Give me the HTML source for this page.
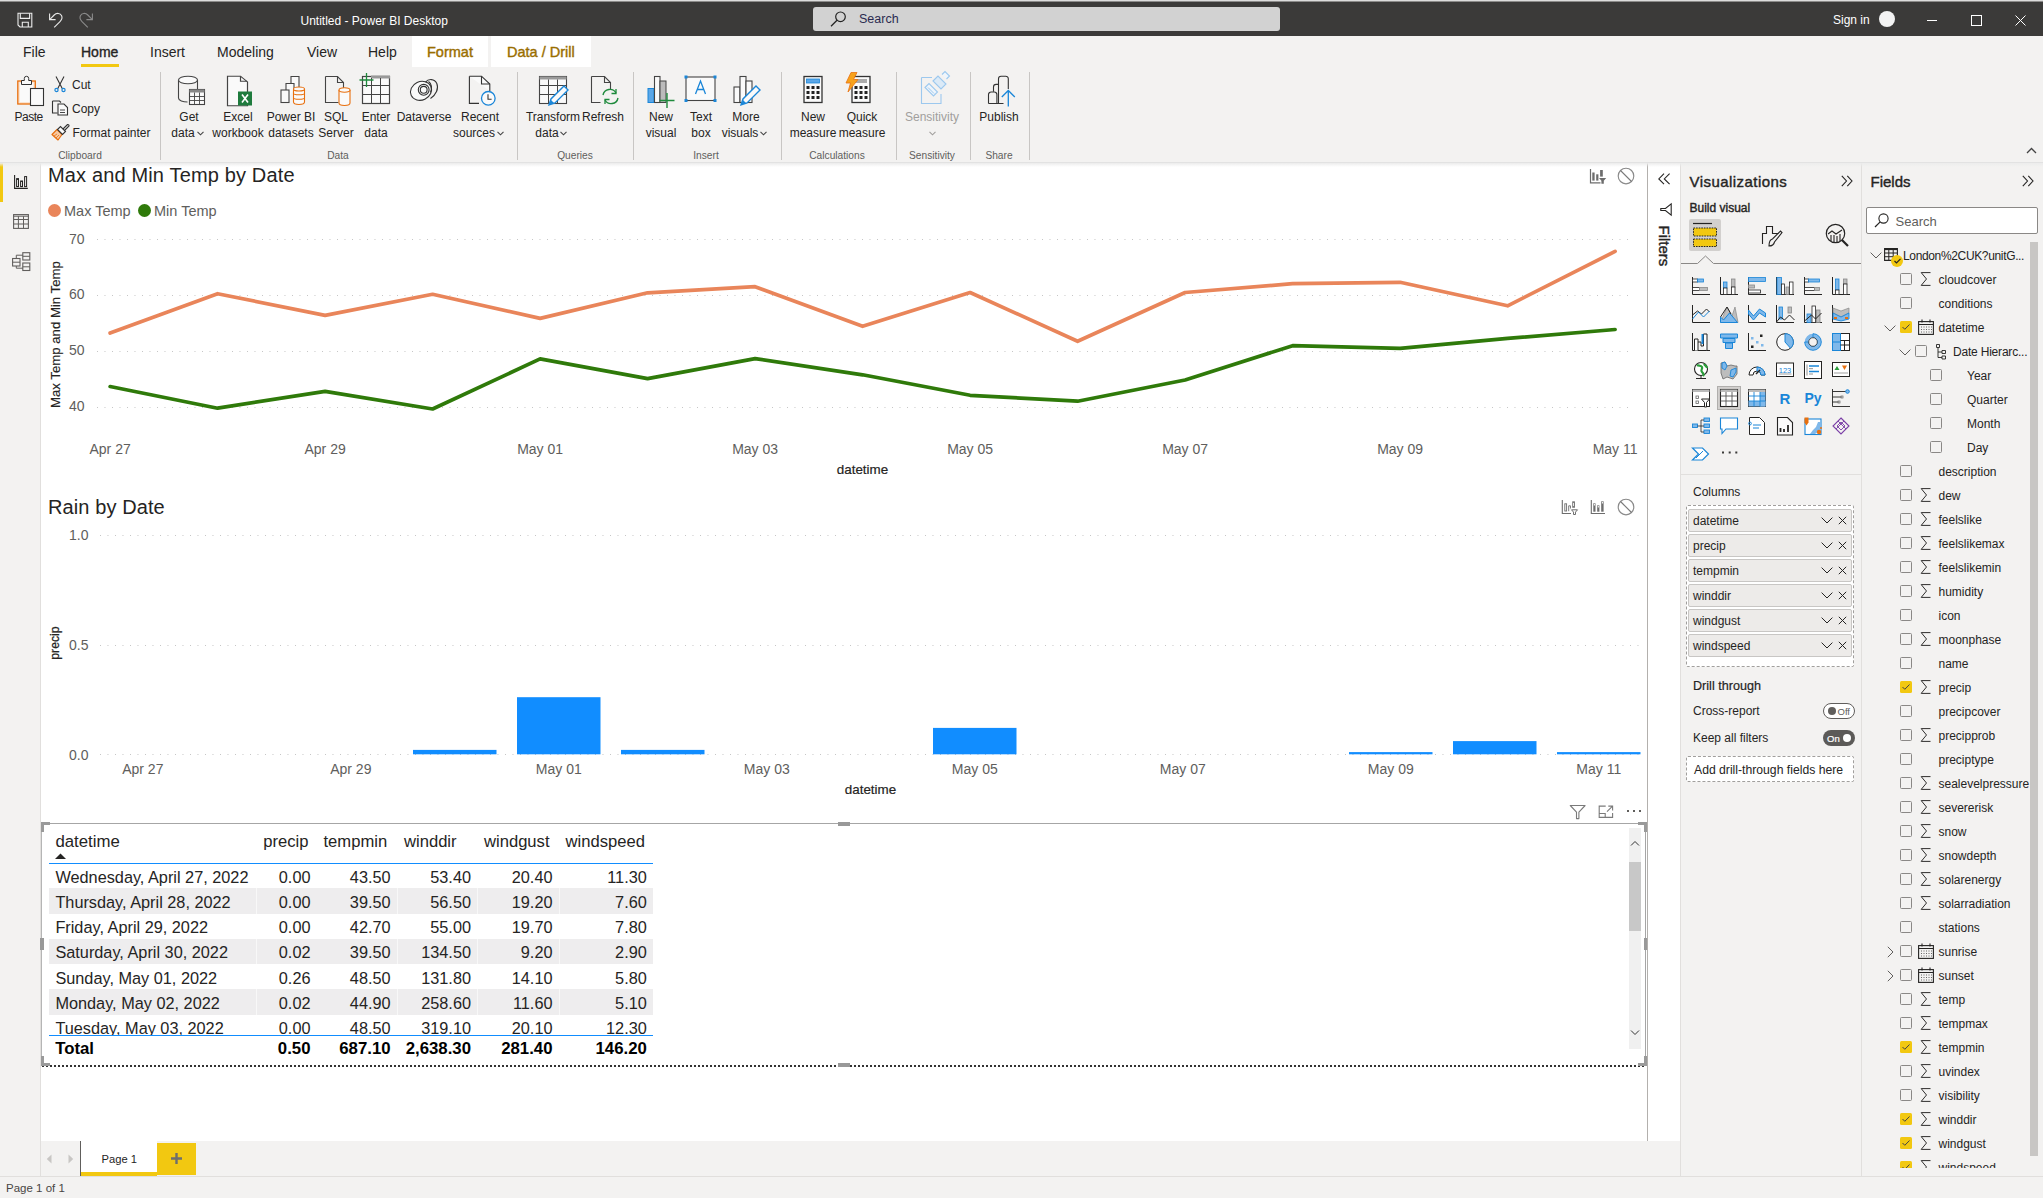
<!DOCTYPE html>
<html><head><meta charset="utf-8"><style>
html,body{margin:0;padding:0;}
body{width:2043px;height:1198px;position:relative;overflow:hidden;background:#f3f2f1;font-family:"Liberation Sans", sans-serif;}
.t{position:absolute;line-height:1;white-space:nowrap;}
svg{overflow:visible}
</style></head><body>
<div style="position:absolute;left:0px;top:0px;width:2043px;height:36px;background:#3b3a39"></div><div style="position:absolute;left:0px;top:0px;width:2043px;height:1px;background:#dcdcdc"></div><div style="position:absolute;left:0px;top:1px;width:2043px;height:1px;background:#8c8b8a"></div><svg style="position:absolute;left:17px;top:12px" width="16" height="16" viewBox="0 0 16 16" fill="none"><path d="M1 1.2H14.8V15H3L1 13z" stroke="#ededed" stroke-width="1.1"/><path d="M3.3 1.2V6.4H12.6V1.2M5.3 15V10.3H11.3V15" stroke="#ededed" stroke-width="1.1"/></svg><svg style="position:absolute;left:48px;top:12px" width="16" height="16" viewBox="0 0 16 16" fill="none"><path d="M1.6 1.5V7.6H7.6" stroke="#e8e8e8" stroke-width="1.1"/><path d="M1.9 7.3L6.2 3C8.6 0.6 12.3 1 13.6 3.8C14.6 6 13.6 8 12 9.6L6.2 15.4" stroke="#e8e8e8" stroke-width="1.1"/></svg><svg style="position:absolute;left:78px;top:12px" width="16" height="16" viewBox="0 0 16 16" fill="none"><g transform="translate(16,0) scale(-1,1)"><path d="M1.6 1.5V7.6H7.6" stroke="#8a8a8a" stroke-width="1.1"/><path d="M1.9 7.3L6.2 3C8.6 0.6 12.3 1 13.6 3.8C14.6 6 13.6 8 12 9.6L6.2 15.4" stroke="#8a8a8a" stroke-width="1.1"/></g></svg><div class="t" style="left:300.5px;top:14.8px;font-size:12px;color:#ffffff;font-weight:400;">Untitled - Power BI Desktop</div><div style="position:absolute;left:813px;top:7px;width:467px;height:24px;background:#d2d2d2;border-radius:3px"></div><svg style="position:absolute;left:830px;top:11px" width="17" height="16" viewBox="0 0 17 16" fill="none"><circle cx="10.5" cy="5.8" r="4.8" stroke="#222" stroke-width="1.2"/><path d="M7 9.3L1 15.2" stroke="#222" stroke-width="1.3"/></svg><div class="t" style="left:859.0px;top:13.4px;font-size:12.5px;color:#2b2b50;font-weight:400;">Search</div><div class="t" style="left:1833.0px;top:13.8px;font-size:12px;color:#ffffff;font-weight:400;">Sign in</div><div style="position:absolute;left:1879px;top:11px;width:16px;height:16px;border-radius:50%;background:#f3f3f3"></div><div style="position:absolute;left:1927px;top:20px;width:10px;height:1px;background:#fff"></div><div style="position:absolute;left:1971px;top:15px;width:9px;height:9px;border:1px solid #fff"></div><svg style="position:absolute;left:2015px;top:15px" width="11" height="11" viewBox="0 0 11 11" fill="none"><path d="M0.5 0.5l10 10M10.5 0.5l-10 10" stroke="#fff" stroke-width="1"/></svg><div style="position:absolute;left:0px;top:36px;width:2043px;height:126px;background:#f3f2f1"></div><div style="position:absolute;left:412px;top:36px;width:76px;height:31px;background:#ffffff"></div><div style="position:absolute;left:491px;top:36px;width:100px;height:31px;background:#ffffff"></div><div class="t" style="left:23.0px;top:45.1px;font-size:14px;color:#252423;font-weight:400;">File</div><div class="t" style="left:150.0px;top:45.1px;font-size:14px;color:#252423;font-weight:400;">Insert</div><div class="t" style="left:217.0px;top:45.1px;font-size:14px;color:#252423;font-weight:400;">Modeling</div><div class="t" style="left:307.0px;top:45.1px;font-size:14px;color:#252423;font-weight:400;">View</div><div class="t" style="left:368.0px;top:45.1px;font-size:14px;color:#252423;font-weight:400;">Help</div><div class="t" style="left:81.0px;top:45.1px;font-size:14px;color:#252423;font-weight:400;-webkit-text-stroke:0.35px currentColor;">Home</div><div class="t" style="left:427.0px;top:44.7px;font-size:14.5px;color:#9a6e00;font-weight:400;-webkit-text-stroke:0.4px currentColor;">Format</div><div class="t" style="left:507.0px;top:44.7px;font-size:14.5px;color:#9a6e00;font-weight:400;-webkit-text-stroke:0.4px currentColor;">Data / Drill</div><div style="position:absolute;left:81px;top:64px;width:38px;height:3px;background:#f2c811"></div><svg style="position:absolute;left:16px;top:75px" width="30" height="32" viewBox="0 0 30 32" fill="none"><rect x="1.8" y="6" width="17.5" height="23" fill="#fbe3cf" stroke="#e8700f" stroke-width="1.3"/><rect x="3.8" y="8" width="13.5" height="19" fill="#fafafa"/><path d="M5.5 9.5V5.5h2.8V3.5a2.2 2.2 0 0 1 4.4 0v2h2.8v4z" fill="#fafafa" stroke="#333" stroke-width="1"/><rect x="14.5" y="13.5" width="13" height="17" fill="#fafafa" stroke="#333" stroke-width="1.1"/></svg><div class="t" style="left:14.5px;top:110.8px;font-size:12px;color:#252423;font-weight:400;letter-spacing:-0.5px">Paste</div><svg style="position:absolute;left:54px;top:76px" width="12" height="16" viewBox="0 0 12 16" fill="none"><path d="M2 0.5L8.5 13M10 0.5L3.5 13" stroke="#333" stroke-width="1.1"/><circle cx="2.5" cy="14" r="1.6" stroke="#1a86d8" stroke-width="1.2"/><circle cx="9.5" cy="14" r="1.6" stroke="#1a86d8" stroke-width="1.2"/></svg><div class="t" style="left:72.0px;top:78.8px;font-size:12px;color:#252423;font-weight:400;">Cut</div><svg style="position:absolute;left:51px;top:100px" width="18" height="16" viewBox="0 0 18 16" fill="none"><path d="M1.5 1v12h5M1.5 1h7l1.5 1.5" stroke="#333" stroke-width="1.1"/><path d="M7 4h6l3.5 3.5V15H7z" fill="#fafafa" stroke="#333" stroke-width="1.1"/><path d="M9 10h5M9 12.5h5" stroke="#333" stroke-width="0.9"/></svg><div class="t" style="left:72.0px;top:102.8px;font-size:12px;color:#252423;font-weight:400;">Copy</div><svg style="position:absolute;left:51px;top:123px" width="18" height="18" viewBox="0 0 18 18" fill="none"><path d="M1 11.5L6 6.5L11 11.5L7 17z" fill="#f8c9a1" stroke="#e8700f" stroke-width="1.2" stroke-linejoin="round"/><path d="M3 13l3-2M5 15l3-3" stroke="#e8700f" stroke-width="0.8"/><path d="M6.5 6.5l3-3 5 5-3 3z" fill="#fafafa" stroke="#333" stroke-width="1.1"/><path d="M12 6l4.5-4.5a1.2 1.2 0 0 1 1.5 1.5L13.5 7.5" stroke="#333" stroke-width="1.1"/></svg><div class="t" style="left:72.5px;top:126.8px;font-size:12px;color:#252423;font-weight:400;">Format painter</div><div class="t" style="left:-420.0px;width:1000px;text-align:center;top:151.4px;font-size:10.2px;color:#605e5c;font-weight:400;">Clipboard</div><div style="position:absolute;left:160px;top:72px;width:1px;height:88px;background:#c8c6c4"></div><svg style="position:absolute;left:177px;top:75px" width="30" height="32" viewBox="0 0 30 32" fill="none"><path d="M1.5 5v18c0 2.5 4.5 4 9 4" stroke="#444" stroke-width="1.1"/><ellipse cx="11" cy="5" rx="9.5" ry="3.8" fill="#fafafa" stroke="#444" stroke-width="1.1"/><path d="M20.5 5v9" stroke="#444" stroke-width="1.1"/><rect x="12.5" y="14.5" width="15" height="15" fill="#fafafa" stroke="#444" stroke-width="1.1"/><rect x="12.5" y="14.5" width="15" height="3" fill="#888"/><path d="M12.5 21.5h15M12.5 25.5h15M17.5 17.5v12M22.5 17.5v12" stroke="#444" stroke-width="0.9"/></svg><div class="t" style="left:-311.0px;width:1000px;text-align:center;top:110.8px;font-size:12px;color:#252423;font-weight:400;">Get</div><div class="t" style="left:-317.0px;width:1000px;text-align:center;top:126.8px;font-size:12px;color:#252423;font-weight:400;">data</div><svg style="position:absolute;left:197px;top:131px" width="7" height="5" viewBox="0 0 7 5" fill="none"><path d="M0.5 0.8L3.5 3.8L6.5 0.8" stroke="#444" stroke-width="1.1"/></svg><svg style="position:absolute;left:226px;top:75px" width="28" height="32" viewBox="0 0 28 32" fill="none"><path d="M1.5 1.5h13l7 7v29h-20z" transform="scale(1,0.82)" fill="#fafafa" stroke="#444" stroke-width="1.2"/><path d="M14.5 1.5v6h6.5" transform="scale(1,0.82)" stroke="#444" stroke-width="1.2"/><rect x="12" y="16.5" width="14" height="14" fill="#1e7b3d"/><path d="M16 19.5l6 8M22 19.5l-6 8" stroke="#fff" stroke-width="1.6"/></svg><div class="t" style="left:-262.0px;width:1000px;text-align:center;top:110.8px;font-size:12px;color:#252423;font-weight:400;">Excel</div><div class="t" style="left:-262.0px;width:1000px;text-align:center;top:126.8px;font-size:12px;color:#252423;font-weight:400;">workbook</div><svg style="position:absolute;left:280px;top:75px" width="28" height="32" viewBox="0 0 28 32" fill="none"><path d="M11 16V1.5h8V13" fill="#fafafa" stroke="#444" stroke-width="1.1"/><path d="M6 27V8.5h8V14" fill="#fafafa" stroke="#444" stroke-width="1.1"/><rect x="1" y="15" width="8" height="12.5" fill="#fafafa" stroke="#444" stroke-width="1.1"/><path d="M13.5 14v13c0 1.7 2.5 2.5 5.5 2.5s5.5-.8 5.5-2.5V14" fill="#fafafa" stroke="#e8700f" stroke-width="1.1"/><ellipse cx="19" cy="14" rx="5.5" ry="2" fill="#fafafa" stroke="#e8700f" stroke-width="1.1"/><path d="M13.5 18.5c0 1.7 11 1.7 11 0M13.5 23c0 1.7 11 1.7 11 0" stroke="#e8700f" stroke-width="1.1"/></svg><div class="t" style="left:-209.0px;width:1000px;text-align:center;top:110.8px;font-size:12px;color:#252423;font-weight:400;">Power BI</div><div class="t" style="left:-209.0px;width:1000px;text-align:center;top:126.8px;font-size:12px;color:#252423;font-weight:400;">datasets</div><svg style="position:absolute;left:324px;top:75px" width="30" height="32" viewBox="0 0 30 32" fill="none"><path d="M1.5 1.5h12l6 6V19" fill="none" stroke="#444" stroke-width="1.1"/><path d="M1.5 1.5v26h13" stroke="#444" stroke-width="1.1"/><path d="M13.5 1.5v6h6" stroke="#444" stroke-width="1.1"/><path d="M15 15v13c0 1.7 2.5 2.5 5.5 2.5S26 29.7 26 28V15" fill="#fafafa" stroke="#e8700f" stroke-width="1.1"/><ellipse cx="20.5" cy="15" rx="5.5" ry="2.2" fill="#fafafa" stroke="#e8700f" stroke-width="1.1"/></svg><div class="t" style="left:-164.0px;width:1000px;text-align:center;top:110.8px;font-size:12px;color:#252423;font-weight:400;">SQL</div><div class="t" style="left:-164.0px;width:1000px;text-align:center;top:126.8px;font-size:12px;color:#252423;font-weight:400;">Server</div><svg style="position:absolute;left:359px;top:73px" width="33" height="34" viewBox="0 0 33 34" fill="none"><rect x="3.5" y="3.5" width="27" height="27" fill="#fafafa" stroke="#444" stroke-width="1.2"/><rect x="12" y="2.5" width="19" height="3" fill="#999"/><path d="M3.5 12.5h27M3.5 21.5h27M12.5 5v25.5M21.5 5v25.5" stroke="#444" stroke-width="1"/><path d="M7.5 0v14M0.5 7h14" stroke="#1e8a3c" stroke-width="1.3"/></svg><div class="t" style="left:-124.0px;width:1000px;text-align:center;top:110.8px;font-size:12px;color:#252423;font-weight:400;">Enter</div><div class="t" style="left:-124.0px;width:1000px;text-align:center;top:126.8px;font-size:12px;color:#252423;font-weight:400;">data</div><svg style="position:absolute;left:409px;top:77px" width="32" height="26" viewBox="0 0 32 26" fill="none"><ellipse cx="12" cy="13.8" rx="10.8" ry="9.2" transform="rotate(-25 12 13.8)" fill="#fafafa" stroke="#333" stroke-width="1.1"/><path d="M16.5 5.2C19.5 1.5 25.5 1.5 27.8 6.5C30 11.5 27 18 21.5 21.5" stroke="#333" stroke-width="1.1"/><path d="M19.5 4.5C22.5 6.5 23.5 11 21.5 15.5" stroke="#333" stroke-width="1.1"/><circle cx="14.7" cy="12.8" r="5.4" fill="#fafafa" stroke="#333" stroke-width="1.1"/><circle cx="14.7" cy="12.8" r="3.4" stroke="#333" stroke-width="1.1"/></svg><div class="t" style="left:-76.0px;width:1000px;text-align:center;top:110.8px;font-size:12px;color:#252423;font-weight:400;">Dataverse</div><svg style="position:absolute;left:468px;top:75px" width="32" height="32" viewBox="0 0 32 32" fill="none"><path d="M1.4 1.2H13.5L21.8 9V16" fill="#fafafa" stroke="#333" stroke-width="1.1"/><path d="M1.4 1.2V28.4H11" stroke="#333" stroke-width="1.1"/><path d="M13.5 1.2V9H21.8" stroke="#333" stroke-width="1.1"/><circle cx="20.3" cy="23.3" r="6.8" fill="#fafafa" stroke="#1a86d8" stroke-width="1.3"/><path d="M20 19.3V24.2H23.6" stroke="#333" stroke-width="1.1"/></svg><div class="t" style="left:-20.0px;width:1000px;text-align:center;top:110.8px;font-size:12px;color:#252423;font-weight:400;">Recent</div><div class="t" style="left:-26.0px;width:1000px;text-align:center;top:126.8px;font-size:12px;color:#252423;font-weight:400;">sources</div><svg style="position:absolute;left:497px;top:131px" width="7" height="5" viewBox="0 0 7 5" fill="none"><path d="M0.5 0.8L3.5 3.8L6.5 0.8" stroke="#444" stroke-width="1.1"/></svg><div class="t" style="left:-162.0px;width:1000px;text-align:center;top:151.4px;font-size:10.2px;color:#605e5c;font-weight:400;">Data</div><div style="position:absolute;left:517px;top:72px;width:1px;height:88px;background:#c8c6c4"></div><svg style="position:absolute;left:538px;top:75px" width="33" height="32" viewBox="0 0 33 32" fill="none"><rect x="1.5" y="1.5" width="27" height="27" fill="#fafafa" stroke="#444" stroke-width="1.1"/><rect x="1.5" y="1.5" width="27" height="3" fill="#999"/><path d="M1.5 10.5h27M1.5 19.5h27M10.5 4.5v24M19.5 4.5v24" stroke="#444" stroke-width="1"/><path d="M11 30l2-6 13-13 4 4-13 13z" fill="#fafafa" stroke="#1a86d8" stroke-width="1.4"/><path d="M11 30l2-5 3 3z" fill="#1a86d8"/></svg><div class="t" style="left:53.0px;width:1000px;text-align:center;top:110.8px;font-size:12px;color:#252423;font-weight:400;">Transform</div><div class="t" style="left:47.0px;width:1000px;text-align:center;top:126.8px;font-size:12px;color:#252423;font-weight:400;">data</div><svg style="position:absolute;left:560px;top:131px" width="7" height="5" viewBox="0 0 7 5" fill="none"><path d="M0.5 0.8L3.5 3.8L6.5 0.8" stroke="#444" stroke-width="1.1"/></svg><svg style="position:absolute;left:590px;top:75px" width="31" height="32" viewBox="0 0 31 32" fill="none"><path d="M1.5 1.5h13l6 6V14" stroke="#444" stroke-width="1.1"/><path d="M1.5 1.5v26h9" stroke="#444" stroke-width="1.1"/><path d="M14.5 1.5v6h6" stroke="#444" stroke-width="1.1"/><path d="M13 20a7 7 0 0 1 13-2M28 23a7 7 0 0 1-13 2" stroke="#1e8a3c" stroke-width="1.4"/><path d="M26 14v4.5h-4.5M15 29v-4.5h4.5" stroke="#1e8a3c" stroke-width="1.3"/></svg><div class="t" style="left:103.0px;width:1000px;text-align:center;top:110.8px;font-size:12px;color:#252423;font-weight:400;">Refresh</div><div class="t" style="left:75.0px;width:1000px;text-align:center;top:151.4px;font-size:10.2px;color:#605e5c;font-weight:400;">Queries</div><div style="position:absolute;left:633px;top:72px;width:1px;height:88px;background:#c8c6c4"></div><svg style="position:absolute;left:647px;top:75px" width="32" height="32" viewBox="0 0 32 32" fill="none"><rect x="1" y="13.5" width="6" height="14" fill="#5ba7e8" stroke="#1a86d8" stroke-width="1"/><rect x="7.5" y="1.5" width="5.5" height="26" fill="#fafafa" stroke="#444" stroke-width="1.1"/><rect x="13" y="6" width="6" height="21.5" fill="#bbb" stroke="#444" stroke-width="1"/><path d="M20 18v15M12.5 25.5h15" stroke="#1e8a3c" stroke-width="1.4"/></svg><div class="t" style="left:161.0px;width:1000px;text-align:center;top:110.8px;font-size:12px;color:#252423;font-weight:400;">New</div><div class="t" style="left:161.0px;width:1000px;text-align:center;top:126.8px;font-size:12px;color:#252423;font-weight:400;">visual</div><svg style="position:absolute;left:684px;top:75px" width="33" height="30" viewBox="0 0 33 30" fill="none"><rect x="2" y="2" width="29" height="23.5" fill="#fafafa" stroke="#444" stroke-width="1.1"/><rect x="0.5" y="0.5" width="3" height="3" fill="#1a86d8"/><rect x="29.5" y="0.5" width="3" height="3" fill="#1a86d8"/><rect x="0.5" y="24" width="3" height="3" fill="#1a86d8"/><rect x="29.5" y="24" width="3" height="3" fill="#1a86d8"/><path d="M11.5 19l5-13 5 13M13.5 14.5h6" stroke="#1a86d8" stroke-width="1.3"/></svg><div class="t" style="left:201.0px;width:1000px;text-align:center;top:110.8px;font-size:12px;color:#252423;font-weight:400;">Text</div><div class="t" style="left:201.0px;width:1000px;text-align:center;top:126.8px;font-size:12px;color:#252423;font-weight:400;">box</div><svg style="position:absolute;left:733px;top:75px" width="32" height="32" viewBox="0 0 32 32" fill="none"><rect x="1" y="12" width="6" height="15.5" fill="#fafafa" stroke="#444" stroke-width="1.1"/><rect x="7" y="1.5" width="6" height="26" fill="#fafafa" stroke="#444" stroke-width="1.1"/><rect x="13" y="6" width="6" height="21.5" fill="#fafafa" stroke="#444" stroke-width="1.1"/><path d="M8 30l2-6 13-13 4 4-13 13z" fill="#fafafa" stroke="#1a86d8" stroke-width="1.4"/><path d="M8 30l2-5 3 3z" fill="#1a86d8"/></svg><div class="t" style="left:246.0px;width:1000px;text-align:center;top:110.8px;font-size:12px;color:#252423;font-weight:400;">More</div><div class="t" style="left:240.0px;width:1000px;text-align:center;top:126.8px;font-size:12px;color:#252423;font-weight:400;">visuals</div><svg style="position:absolute;left:760px;top:131px" width="7" height="5" viewBox="0 0 7 5" fill="none"><path d="M0.5 0.8L3.5 3.8L6.5 0.8" stroke="#444" stroke-width="1.1"/></svg><div class="t" style="left:206.0px;width:1000px;text-align:center;top:151.4px;font-size:10.2px;color:#605e5c;font-weight:400;">Insert</div><div style="position:absolute;left:781px;top:72px;width:1px;height:88px;background:#c8c6c4"></div><svg style="position:absolute;left:803px;top:75px" width="22" height="30" viewBox="0 0 22 30" fill="none"><rect x="1" y="1.5" width="18" height="26" fill="#fafafa" stroke="#333" stroke-width="1.3"/><rect x="3.5" y="4" width="13" height="4" fill="#5ba7e8" stroke="#1a86d8" stroke-width="0.8"/><rect x="3.5" y="11" width="3" height="3" fill="#222"/><rect x="8.5" y="11" width="3" height="3" fill="#222"/><rect x="13.5" y="11" width="3" height="3" fill="#222"/><rect x="3.5" y="16" width="3" height="3" fill="#222"/><rect x="8.5" y="16" width="3" height="3" fill="#222"/><rect x="13.5" y="16" width="3" height="3" fill="#222"/><rect x="3.5" y="21" width="3" height="3" fill="#222"/><rect x="8.5" y="21" width="3" height="3" fill="#222"/><rect x="13.5" y="21" width="3" height="3" fill="#222"/></svg><div class="t" style="left:313.0px;width:1000px;text-align:center;top:110.8px;font-size:12px;color:#252423;font-weight:400;">New</div><div class="t" style="left:313.0px;width:1000px;text-align:center;top:126.8px;font-size:12px;color:#252423;font-weight:400;">measure</div><svg style="position:absolute;left:845px;top:72px" width="28" height="33" viewBox="0 0 28 33" fill="none"><rect x="7" y="4.5" width="18" height="26" fill="#fafafa" stroke="#333" stroke-width="1.3"/><rect x="10" y="7" width="12" height="4" fill="#aaa"/><rect x="9.5" y="14" width="3" height="3" fill="#222"/><rect x="14.5" y="14" width="3" height="3" fill="#222"/><rect x="19.5" y="14" width="3" height="3" fill="#222"/><rect x="9.5" y="19" width="3" height="3" fill="#222"/><rect x="14.5" y="19" width="3" height="3" fill="#222"/><rect x="19.5" y="19" width="3" height="3" fill="#222"/><rect x="9.5" y="24" width="3" height="3" fill="#222"/><rect x="14.5" y="24" width="3" height="3" fill="#222"/><rect x="19.5" y="24" width="3" height="3" fill="#222"/><path d="M6 0.5h6l-3.5 7h4.5L3 20l2.5-9H1z" fill="#f7a21b" stroke="#e8700f" stroke-width="0.8"/></svg><div class="t" style="left:362.0px;width:1000px;text-align:center;top:110.8px;font-size:12px;color:#252423;font-weight:400;">Quick</div><div class="t" style="left:362.0px;width:1000px;text-align:center;top:126.8px;font-size:12px;color:#252423;font-weight:400;">measure</div><div class="t" style="left:337.0px;width:1000px;text-align:center;top:151.4px;font-size:10.2px;color:#605e5c;font-weight:400;">Calculations</div><div style="position:absolute;left:896px;top:72px;width:1px;height:88px;background:#c8c6c4"></div><svg style="position:absolute;left:920px;top:73px" width="32" height="32" viewBox="0 0 32 32" fill="none"><path d="M1.5 4.5H12M1.5 4.5V30.5H21V21" stroke="#9cc8ee" stroke-width="1.1"/><path d="M5 14.5L9 10.5L17.5 19L13.5 23z" fill="#eef5fc" stroke="#9cc8ee" stroke-width="1.1"/><path d="M8 14.5l6 6" stroke="#9cc8ee" stroke-width="1"/><path d="M13 8L18 3L26 11L21 16z" fill="#dbeaf7" stroke="#9cc8ee" stroke-width="1.1"/><path d="M22 1.5L25 -1.5 29.5 3 26.5 6" fill="#eef5fc" stroke="#9cc8ee" stroke-width="1.1"/></svg><div class="t" style="left:432.0px;width:1000px;text-align:center;top:110.8px;font-size:12px;color:#a19f9d;font-weight:400;">Sensitivity</div><svg style="position:absolute;left:929px;top:131px" width="7" height="5" viewBox="0 0 7 5" fill="none"><path d="M0.5 0.8L3.5 3.8L6.5 0.8" stroke="#a19f9d" stroke-width="1.1"/></svg><div class="t" style="left:432.0px;width:1000px;text-align:center;top:151.4px;font-size:10.2px;color:#605e5c;font-weight:400;">Sensitivity</div><div style="position:absolute;left:970px;top:72px;width:1px;height:88px;background:#c8c6c4"></div><svg style="position:absolute;left:987px;top:75px" width="30" height="32" viewBox="0 0 30 32" fill="none"><path d="M11.5 28.5V3.8a2.6 2.6 0 0 1 2.6-2.6h4.6a2.6 2.6 0 0 1 2.6 2.6V14" stroke="#333" stroke-width="1.1"/><path d="M6.5 16.8V12a2.6 2.6 0 0 1 2.6-2.6h2.4" stroke="#333" stroke-width="1.1"/><path d="M1.5 28.5V19.6a2.6 2.6 0 0 1 2.6-2.6h3.2a2.6 2.6 0 0 1 2.6 2.6V28.5M1.5 28.5h15" stroke="#333" stroke-width="1.1"/><path d="M21.3 31.5V15.5M14.8 22l6.5-6.5 6.5 6.5" stroke="#1a86d8" stroke-width="1.3"/></svg><div class="t" style="left:499.0px;width:1000px;text-align:center;top:110.8px;font-size:12px;color:#252423;font-weight:400;">Publish</div><div class="t" style="left:499.0px;width:1000px;text-align:center;top:151.4px;font-size:10.2px;color:#605e5c;font-weight:400;">Share</div><div style="position:absolute;left:1029px;top:72px;width:1px;height:88px;background:#c8c6c4"></div><svg style="position:absolute;left:2026px;top:147px" width="11" height="7" viewBox="0 0 11 7" fill="none"><path d="M1 6L5.5 1.5L10 6" stroke="#444" stroke-width="1.3"/></svg><div style="position:absolute;left:0px;top:162px;width:2043px;height:1px;background:#e2e2e2"></div><div style="position:absolute;left:0px;top:163px;width:40px;height:1014px;background:#f3f2f1"></div><div style="position:absolute;left:40px;top:163px;width:1px;height:1014px;background:#e1dfdd"></div><div style="position:absolute;left:0px;top:163px;width:3px;height:39px;background:#f2c811"></div><svg style="position:absolute;left:14px;top:175px" width="14" height="14" viewBox="0 0 14 14" fill="none"><path d="M0.6 0V13.4H13.8" stroke="#252423" stroke-width="1.1"/><rect x="2.6" y="3.6" width="1.9" height="8" stroke="#252423" stroke-width="1"/><rect x="6.6" y="6" width="1.9" height="5.6" stroke="#252423" stroke-width="1"/><rect x="10.6" y="1.6" width="2" height="10" stroke="#252423" stroke-width="1"/></svg><svg style="position:absolute;left:13px;top:214px" width="16" height="15" viewBox="0 0 16 15" fill="none"><rect x="0.6" y="0.6" width="14.8" height="13.8" stroke="#605e5c" stroke-width="1.1"/><path d="M0.6 2.2h14.8M0.6 5.5h14.8M0.6 10h14.8M5.4 2.2v12.2M10.5 2.2v12.2" stroke="#605e5c" stroke-width="1"/></svg><svg style="position:absolute;left:12px;top:252px" width="18" height="19" viewBox="0 0 18 19" fill="none"><rect x="10.8" y="0.7" width="7" height="7.3" stroke="#605e5c" stroke-width="1.1"/><path d="M10.8 4.3h7" stroke="#605e5c" stroke-width="1"/><rect x="0.6" y="6.5" width="7.4" height="7.5" stroke="#605e5c" stroke-width="1.1"/><path d="M0.6 10.2h7.4" stroke="#605e5c" stroke-width="1"/><rect x="10.8" y="11" width="7" height="7.5" stroke="#605e5c" stroke-width="1.1"/><path d="M10.8 14.8h7M4.3 6.5V3.2H10.8M4.3 14V16.2H10.8" stroke="#605e5c" stroke-width="1"/></svg><div style="position:absolute;left:41px;top:163px;width:1606px;height:978px;background:#ffffff"></div><div style="position:absolute;left:1647px;top:163px;width:1px;height:978px;background:#b3b0ad"></div><div style="position:absolute;left:41px;top:1141px;width:1607px;height:35px;background:#f3f2f1"></div><div style="position:absolute;left:0px;top:1176px;width:2043px;height:1px;background:#e1dfdd"></div><div style="position:absolute;left:0px;top:1177px;width:2043px;height:21px;background:#f3f2f1"></div><svg style="position:absolute;left:46px;top:1154px" width="6" height="10" viewBox="0 0 6 10" fill="none"><path d="M5.5 0.5L0.8 5l4.7 4.5z" fill="#c8c6c4"/></svg><svg style="position:absolute;left:68px;top:1154px" width="6" height="10" viewBox="0 0 6 10" fill="none"><path d="M0.5 0.5L5.2 5L0.5 9.5z" fill="#c8c6c4"/></svg><div style="position:absolute;left:80px;top:1141px;width:1px;height:35px;background:#605e5c"></div><div style="position:absolute;left:81px;top:1141px;width:76px;height:35px;background:#ffffff"></div><div style="position:absolute;left:81px;top:1172px;width:76px;height:4px;background:#f2c811"></div><div class="t" style="left:101.5px;top:1153.5px;font-size:11.2px;color:#252423;font-weight:400;">Page 1</div><div style="position:absolute;left:157px;top:1143px;width:39px;height:32px;background:#f2c811"></div><svg style="position:absolute;left:170px;top:1152px" width="13" height="13" viewBox="0 0 13 13" fill="none"><path d="M6.5 1v11M1 6.5h11" stroke="#6e6e6e" stroke-width="2.4"/></svg><div class="t" style="left:6.0px;top:1183.3px;font-size:11.5px;color:#484644;font-weight:400;">Page 1 of 1</div><div class="t" style="left:48.0px;top:165.1px;font-size:20px;color:#252423;font-weight:400;letter-spacing:0.15px">Max and Min Temp by Date</div><svg style="position:absolute;left:1589px;top:168px" width="19" height="17" viewBox="0 0 19 17" fill="none"><path d="M1.5 1v13.8h10" stroke="#6d6d6d" stroke-width="1.2"/><rect x="3.3" y="4.5" width="2.3" height="8.1" fill="#6d6d6d"/><rect x="7.2" y="6.3" width="2.2" height="6.3" fill="#6d6d6d"/><rect x="11.1" y="2" width="2.7" height="6.6" fill="#6d6d6d"/><path d="M10 10h7.2l-2.4 2.7v3h-2.4v-3z" fill="#6d6d6d"/></svg><svg style="position:absolute;left:1617px;top:167px" width="18" height="18" viewBox="0 0 18 18" fill="none"><circle cx="9" cy="9" r="7.8" stroke="#8a8a8a" stroke-width="1.15"/><path d="M3.5 3.5l11 11" stroke="#7a7a7a" stroke-width="1.1"/></svg><div style="position:absolute;left:48px;top:204px;width:13px;height:13px;border-radius:50%;background:#e9855a"></div><div class="t" style="left:64.0px;top:203.7px;font-size:14.5px;color:#605e5c;font-weight:400;">Max Temp</div><div style="position:absolute;left:138px;top:204px;width:13px;height:13px;border-radius:50%;background:#2f7a0a"></div><div class="t" style="left:154.0px;top:203.7px;font-size:14.5px;color:#605e5c;font-weight:400;">Min Temp</div><div class="t" style="right:1958.5px;top:231.5px;font-size:14px;color:#605e5c;font-weight:400;">70</div><div class="t" style="right:1958.5px;top:287.3px;font-size:14px;color:#605e5c;font-weight:400;">60</div><div class="t" style="right:1958.5px;top:343.1px;font-size:14px;color:#605e5c;font-weight:400;">50</div><div class="t" style="right:1958.5px;top:398.9px;font-size:14px;color:#605e5c;font-weight:400;">40</div><div class="t" style="left:-19px;top:328px;width:150px;text-align:center;font-size:13.2px;color:#252423;transform:rotate(-90deg);-webkit-text-stroke:0.15px currentColor;">Max Temp and Min Temp</div><div style="position:absolute;left:97px;top:238.5px;width:1535px;height:1.3px;background-image:linear-gradient(90deg,#c4c4c4 1.3px,transparent 1.3px);background-size:7.5px 1.3px;"></div><div style="position:absolute;left:97px;top:294.5px;width:1535px;height:1.3px;background-image:linear-gradient(90deg,#c4c4c4 1.3px,transparent 1.3px);background-size:7.5px 1.3px;"></div><div style="position:absolute;left:97px;top:350.5px;width:1535px;height:1.3px;background-image:linear-gradient(90deg,#c4c4c4 1.3px,transparent 1.3px);background-size:7.5px 1.3px;"></div><div style="position:absolute;left:97px;top:406.5px;width:1535px;height:1.3px;background-image:linear-gradient(90deg,#c4c4c4 1.3px,transparent 1.3px);background-size:7.5px 1.3px;"></div><svg style="position:absolute;left:41px;top:163px" width="1606" height="320" viewBox="0 0 1606 320" fill="none"><polyline points="69.1,170.0 176.6,130.7 284.1,152.4 391.6,131.3 499.1,155.4 606.6,129.8 714.1,123.7 821.6,163.3 929.1,129.5 1036.6,178.3 1144.1,129.5 1251.6,120.7 1359.1,119.3 1466.6,142.8 1574.1,88.4" stroke="#e9855a" stroke-width="3.7" stroke-linejoin="round" stroke-linecap="round" fill="none"/><polyline points="69.1,223.5 176.6,245.2 284.1,228.3 391.6,246.0 499.1,195.9 606.6,215.6 714.1,195.6 821.6,211.8 929.1,232.3 1036.6,238.2 1144.1,217.0 1251.6,182.7 1359.1,185.3 1466.6,175.4 1574.1,166.5" stroke="#2f7a0a" stroke-width="3.7" stroke-linejoin="round" stroke-linecap="round" fill="none"/></svg><div class="t" style="left:-389.9px;width:1000px;text-align:center;top:442.1px;font-size:14px;color:#605e5c;font-weight:400;">Apr 27</div><div class="t" style="left:-174.9px;width:1000px;text-align:center;top:442.1px;font-size:14px;color:#605e5c;font-weight:400;">Apr 29</div><div class="t" style="left:40.1px;width:1000px;text-align:center;top:442.1px;font-size:14px;color:#605e5c;font-weight:400;">May 01</div><div class="t" style="left:255.1px;width:1000px;text-align:center;top:442.1px;font-size:14px;color:#605e5c;font-weight:400;">May 03</div><div class="t" style="left:470.1px;width:1000px;text-align:center;top:442.1px;font-size:14px;color:#605e5c;font-weight:400;">May 05</div><div class="t" style="left:685.1px;width:1000px;text-align:center;top:442.1px;font-size:14px;color:#605e5c;font-weight:400;">May 07</div><div class="t" style="left:900.1px;width:1000px;text-align:center;top:442.1px;font-size:14px;color:#605e5c;font-weight:400;">May 09</div><div class="t" style="left:1115.1px;width:1000px;text-align:center;top:442.1px;font-size:14px;color:#605e5c;font-weight:400;">May 11</div><div class="t" style="left:362.5px;width:1000px;text-align:center;top:462.7px;font-size:13.4px;color:#252423;font-weight:400;-webkit-text-stroke:0.2px currentColor;">datetime</div><div class="t" style="left:48.0px;top:496.6px;font-size:20px;color:#252423;font-weight:400;letter-spacing:0.1px">Rain by Date</div><svg style="position:absolute;left:1561px;top:499px" width="18" height="17" viewBox="0 0 18 17" fill="none"><path d="M1.3 1V14.5H10" stroke="#6d6d6d" stroke-width="1.1"/><rect x="3.8" y="4.8" width="1.8" height="7.2" stroke="#6d6d6d" stroke-width="0.9"/><path d="M7.7 12.2V6.8h1.8V9.5" stroke="#6d6d6d" stroke-width="0.9"/><rect x="11.7" y="2.8" width="1.8" height="5.5" stroke="#6d6d6d" stroke-width="0.9"/><path d="M10.5 10.8h6l-2 2.3v2.4h-2v-2.4z" stroke="#6d6d6d" stroke-width="1"/></svg><svg style="position:absolute;left:1590px;top:499px" width="16" height="17" viewBox="0 0 16 17" fill="none"><path d="M1.3 1V14.5H15" stroke="#6d6d6d" stroke-width="1.1"/><rect x="3.3" y="4.3" width="2.2" height="8.4" fill="#6d6d6d"/><rect x="7.2" y="6.3" width="2.2" height="6.4" fill="#6d6d6d"/><rect x="11.2" y="2.3" width="2.4" height="10.4" fill="#6d6d6d"/><rect x="3.9" y="4.9" width="1" height="1.6" fill="#fff"/><rect x="7.8" y="6.9" width="1" height="1.6" fill="#fff"/><rect x="11.9" y="2.9" width="1" height="1.6" fill="#fff"/></svg><svg style="position:absolute;left:1617px;top:498px" width="18" height="18" viewBox="0 0 18 18" fill="none"><circle cx="9" cy="9" r="7.8" stroke="#8a8a8a" stroke-width="1.15"/><path d="M3.5 3.5l11 11" stroke="#7a7a7a" stroke-width="1.1"/></svg><div class="t" style="right:1954.5px;top:527.9px;font-size:14px;color:#605e5c;font-weight:400;">1.0</div><div class="t" style="right:1954.5px;top:638.1px;font-size:14px;color:#605e5c;font-weight:400;">0.5</div><div class="t" style="right:1954.5px;top:747.6px;font-size:14px;color:#605e5c;font-weight:400;">0.0</div><div class="t" style="left:5px;top:637px;width:100px;text-align:center;font-size:12.2px;color:#252423;transform:rotate(-90deg);-webkit-text-stroke:0.25px currentColor;">precip</div><div style="position:absolute;left:100px;top:534.5px;width:1540px;height:1.3px;background-image:linear-gradient(90deg,#c4c4c4 1.3px,transparent 1.3px);background-size:7.5px 1.3px;"></div><div style="position:absolute;left:100px;top:644.5px;width:1540px;height:1.3px;background-image:linear-gradient(90deg,#c4c4c4 1.3px,transparent 1.3px);background-size:7.5px 1.3px;"></div><div style="position:absolute;left:100px;top:754.0px;width:1540px;height:1.3px;background-image:linear-gradient(90deg,#c4c4c4 1.3px,transparent 1.3px);background-size:7.5px 1.3px;"></div><svg style="position:absolute;left:0px;top:0px" width="2043" height="800" viewBox="0 0 2043 800" fill="none"><rect x="413.0" y="749.9" width="83.5" height="4.4" fill="#118dff"/><rect x="517.0" y="697.2" width="83.5" height="57.1" fill="#118dff"/><rect x="621.0" y="749.9" width="83.5" height="4.4" fill="#118dff"/><rect x="933.0" y="727.9" width="83.5" height="26.4" fill="#118dff"/><rect x="1349.0" y="752.1" width="83.5" height="2.2" fill="#118dff"/><rect x="1453.0" y="741.1" width="83.5" height="13.2" fill="#118dff"/><rect x="1557.0" y="752.1" width="83.5" height="2.2" fill="#118dff"/></svg><div class="t" style="left:-357.2px;width:1000px;text-align:center;top:762.4px;font-size:14px;color:#605e5c;font-weight:400;">Apr 27</div><div class="t" style="left:-149.2px;width:1000px;text-align:center;top:762.4px;font-size:14px;color:#605e5c;font-weight:400;">Apr 29</div><div class="t" style="left:58.8px;width:1000px;text-align:center;top:762.4px;font-size:14px;color:#605e5c;font-weight:400;">May 01</div><div class="t" style="left:266.8px;width:1000px;text-align:center;top:762.4px;font-size:14px;color:#605e5c;font-weight:400;">May 03</div><div class="t" style="left:474.8px;width:1000px;text-align:center;top:762.4px;font-size:14px;color:#605e5c;font-weight:400;">May 05</div><div class="t" style="left:682.8px;width:1000px;text-align:center;top:762.4px;font-size:14px;color:#605e5c;font-weight:400;">May 07</div><div class="t" style="left:890.8px;width:1000px;text-align:center;top:762.4px;font-size:14px;color:#605e5c;font-weight:400;">May 09</div><div class="t" style="left:1098.8px;width:1000px;text-align:center;top:762.4px;font-size:14px;color:#605e5c;font-weight:400;">May 11</div><div class="t" style="left:370.5px;width:1000px;text-align:center;top:782.7px;font-size:13.4px;color:#252423;font-weight:400;-webkit-text-stroke:0.2px currentColor;">datetime</div><svg style="position:absolute;left:1569px;top:804px" width="18" height="16" viewBox="0 0 18 16" fill="none"><path d="M1.3 1.5h14.8l-6.2 6.6v6.5H7.5V8.1z" stroke="#7a7a7a" stroke-width="1.1" stroke-linejoin="round"/></svg><svg style="position:absolute;left:1598px;top:805px" width="16" height="14" viewBox="0 0 16 14" fill="none"><path d="M7.7 1.1H1.2V12.4H14.6V8M1.2 8.5H7.2V12.4" stroke="#7a7a7a" stroke-width="1.1"/><path d="M9 6.7L14.3 1.4M10.3 1.1h4.3v4.3" stroke="#7a7a7a" stroke-width="1.1"/></svg><div style="position:absolute;left:1627px;top:810px;width:2px;height:2px;background:#605e5c"></div><div style="position:absolute;left:1633px;top:810px;width:2px;height:2px;background:#605e5c"></div><div style="position:absolute;left:1639px;top:810px;width:2px;height:2px;background:#605e5c"></div><div style="position:absolute;left:42px;top:823px;width:1603px;height:1px;background:#a6a6a6"></div><div style="position:absolute;left:41px;top:823px;width:1px;height:243px;background:#b5b5b5"></div><div style="position:absolute;left:1645px;top:823px;width:1px;height:243px;background:#a6a6a6"></div><div style="position:absolute;left:42px;top:1065px;width:1603px;height:2px;background-image:linear-gradient(90deg,#333 2px,transparent 2px);background-size:4px 2px;"></div><div style="position:absolute;left:41px;top:822px;width:9px;height:3px;background:#9a9a9a"></div><div style="position:absolute;left:41px;top:822px;width:3px;height:10px;background:#9a9a9a"></div><div style="position:absolute;left:1638px;top:822px;width:9px;height:3px;background:#9a9a9a"></div><div style="position:absolute;left:1644px;top:822px;width:3px;height:10px;background:#9a9a9a"></div><div style="position:absolute;left:41px;top:1063px;width:9px;height:3px;background:#9a9a9a"></div><div style="position:absolute;left:41px;top:1056px;width:3px;height:10px;background:#9a9a9a"></div><div style="position:absolute;left:1638px;top:1063px;width:9px;height:3px;background:#9a9a9a"></div><div style="position:absolute;left:1644px;top:1056px;width:3px;height:10px;background:#9a9a9a"></div><div style="position:absolute;left:838px;top:822px;width:12px;height:4px;background:#999"></div><div style="position:absolute;left:838px;top:1063px;width:12px;height:4px;background:#999"></div><div style="position:absolute;left:40px;top:938px;width:4px;height:12px;background:#999"></div><div style="position:absolute;left:1644px;top:938px;width:3px;height:12px;background:#999"></div><div class="t" style="left:55.4px;top:833.8px;font-size:16.8px;color:#252423;font-weight:400;">datetime</div><svg style="position:absolute;left:55px;top:853px" width="11" height="6" viewBox="0 0 11 6" fill="none"><path d="M0 6L5.5 0.5L11 6z" fill="#252423"/></svg><div class="t" style="left:263.2px;top:833.9px;font-size:16.6px;color:#252423;font-weight:400;">precip</div><div class="t" style="left:323.5px;top:833.9px;font-size:16.6px;color:#252423;font-weight:400;">tempmin</div><div class="t" style="left:404.0px;top:833.9px;font-size:16.6px;color:#252423;font-weight:400;">winddir</div><div class="t" style="left:484.0px;top:833.9px;font-size:16.6px;color:#252423;font-weight:400;">windgust</div><div class="t" style="left:565.6px;top:833.9px;font-size:16.6px;color:#252423;font-weight:400;">windspeed</div><div style="position:absolute;left:49px;top:862.5px;width:604px;height:1.6px;background:#118dff"></div><div style="position:absolute;left:49px;top:888.4px;width:604px;height:25.5px;background:#eeedee"></div><div style="position:absolute;left:49px;top:938.5px;width:604px;height:25.5px;background:#eeedee"></div><div style="position:absolute;left:49px;top:989.4px;width:604px;height:25.5px;background:#eeedee"></div><div style="position:absolute;left:0;top:864px;width:2043px;height:171px;overflow:hidden"><div class="t" style="left:55.4px;top:4.8px;font-size:16.3px;color:#252423;font-weight:400;">Wednesday, April 27, 2022</div><div class="t" style="right:1732.5px;top:4.8px;font-size:16.3px;color:#252423;font-weight:400;">0.00</div><div class="t" style="right:1652.4px;top:4.8px;font-size:16.3px;color:#252423;font-weight:400;">43.50</div><div class="t" style="right:1572.0px;top:4.8px;font-size:16.3px;color:#252423;font-weight:400;">53.40</div><div class="t" style="right:1490.5px;top:4.8px;font-size:16.3px;color:#252423;font-weight:400;">20.40</div><div class="t" style="right:1396.2px;top:4.8px;font-size:16.3px;color:#252423;font-weight:400;">11.30</div><div class="t" style="left:55.4px;top:29.8px;font-size:16.3px;color:#252423;font-weight:400;">Thursday, April 28, 2022</div><div class="t" style="right:1732.5px;top:29.8px;font-size:16.3px;color:#252423;font-weight:400;">0.00</div><div class="t" style="right:1652.4px;top:29.8px;font-size:16.3px;color:#252423;font-weight:400;">39.50</div><div class="t" style="right:1572.0px;top:29.8px;font-size:16.3px;color:#252423;font-weight:400;">56.50</div><div class="t" style="right:1490.5px;top:29.8px;font-size:16.3px;color:#252423;font-weight:400;">19.20</div><div class="t" style="right:1396.2px;top:29.8px;font-size:16.3px;color:#252423;font-weight:400;">7.60</div><div class="t" style="left:55.4px;top:54.8px;font-size:16.3px;color:#252423;font-weight:400;">Friday, April 29, 2022</div><div class="t" style="right:1732.5px;top:54.8px;font-size:16.3px;color:#252423;font-weight:400;">0.00</div><div class="t" style="right:1652.4px;top:54.8px;font-size:16.3px;color:#252423;font-weight:400;">42.70</div><div class="t" style="right:1572.0px;top:54.8px;font-size:16.3px;color:#252423;font-weight:400;">55.00</div><div class="t" style="right:1490.5px;top:54.8px;font-size:16.3px;color:#252423;font-weight:400;">19.70</div><div class="t" style="right:1396.2px;top:54.8px;font-size:16.3px;color:#252423;font-weight:400;">7.80</div><div class="t" style="left:55.4px;top:80.4px;font-size:16.3px;color:#252423;font-weight:400;">Saturday, April 30, 2022</div><div class="t" style="right:1732.5px;top:80.4px;font-size:16.3px;color:#252423;font-weight:400;">0.02</div><div class="t" style="right:1652.4px;top:80.4px;font-size:16.3px;color:#252423;font-weight:400;">39.50</div><div class="t" style="right:1572.0px;top:80.4px;font-size:16.3px;color:#252423;font-weight:400;">134.50</div><div class="t" style="right:1490.5px;top:80.4px;font-size:16.3px;color:#252423;font-weight:400;">9.20</div><div class="t" style="right:1396.2px;top:80.4px;font-size:16.3px;color:#252423;font-weight:400;">2.90</div><div class="t" style="left:55.4px;top:105.6px;font-size:16.3px;color:#252423;font-weight:400;">Sunday, May 01, 2022</div><div class="t" style="right:1732.5px;top:105.6px;font-size:16.3px;color:#252423;font-weight:400;">0.26</div><div class="t" style="right:1652.4px;top:105.6px;font-size:16.3px;color:#252423;font-weight:400;">48.50</div><div class="t" style="right:1572.0px;top:105.6px;font-size:16.3px;color:#252423;font-weight:400;">131.80</div><div class="t" style="right:1490.5px;top:105.6px;font-size:16.3px;color:#252423;font-weight:400;">14.10</div><div class="t" style="right:1396.2px;top:105.6px;font-size:16.3px;color:#252423;font-weight:400;">5.80</div><div class="t" style="left:55.4px;top:130.8px;font-size:16.3px;color:#252423;font-weight:400;">Monday, May 02, 2022</div><div class="t" style="right:1732.5px;top:130.8px;font-size:16.3px;color:#252423;font-weight:400;">0.02</div><div class="t" style="right:1652.4px;top:130.8px;font-size:16.3px;color:#252423;font-weight:400;">44.90</div><div class="t" style="right:1572.0px;top:130.8px;font-size:16.3px;color:#252423;font-weight:400;">258.60</div><div class="t" style="right:1490.5px;top:130.8px;font-size:16.3px;color:#252423;font-weight:400;">11.60</div><div class="t" style="right:1396.2px;top:130.8px;font-size:16.3px;color:#252423;font-weight:400;">5.10</div><div class="t" style="left:55.4px;top:156.1px;font-size:16.3px;color:#252423;font-weight:400;">Tuesday, May 03, 2022</div><div class="t" style="right:1732.5px;top:156.1px;font-size:16.3px;color:#252423;font-weight:400;">0.00</div><div class="t" style="right:1652.4px;top:156.1px;font-size:16.3px;color:#252423;font-weight:400;">48.50</div><div class="t" style="right:1572.0px;top:156.1px;font-size:16.3px;color:#252423;font-weight:400;">319.10</div><div class="t" style="right:1490.5px;top:156.1px;font-size:16.3px;color:#252423;font-weight:400;">20.10</div><div class="t" style="right:1396.2px;top:156.1px;font-size:16.3px;color:#252423;font-weight:400;">12.30</div></div><div style="position:absolute;left:256.3px;top:864px;width:1px;height:171px;background:rgba(255,255,255,0.6)"></div><div style="position:absolute;left:396.9px;top:864px;width:1px;height:171px;background:rgba(255,255,255,0.6)"></div><div style="position:absolute;left:477.2px;top:864px;width:1px;height:171px;background:rgba(255,255,255,0.6)"></div><div style="position:absolute;left:559.2px;top:864px;width:1px;height:171px;background:rgba(255,255,255,0.6)"></div><div style="position:absolute;left:49px;top:1034.5px;width:604px;height:1.6px;background:#118dff"></div><div class="t" style="left:55.2px;top:1040.5px;font-size:16.8px;color:#000;font-weight:700;">Total</div><div class="t" style="right:1732.5px;top:1040.5px;font-size:16.8px;color:#000;font-weight:700;">0.50</div><div class="t" style="right:1652.4px;top:1040.5px;font-size:16.8px;color:#000;font-weight:700;">687.10</div><div class="t" style="right:1572.0px;top:1040.5px;font-size:16.8px;color:#000;font-weight:700;">2,638.30</div><div class="t" style="right:1490.5px;top:1040.5px;font-size:16.8px;color:#000;font-weight:700;">281.40</div><div class="t" style="right:1396.2px;top:1040.5px;font-size:16.8px;color:#000;font-weight:700;">146.20</div><div style="position:absolute;left:1629px;top:828px;width:12px;height:221px;background:#f0f0f0"></div><div style="position:absolute;left:1629px;top:862px;width:12px;height:69px;background:#c8c8c8"></div><svg style="position:absolute;left:1630px;top:840px" width="10" height="6" viewBox="0 0 10 6" fill="none"><path d="M1 5.5L5 1.5l4 4" stroke="#333" stroke-width="1"/></svg><svg style="position:absolute;left:1630px;top:1030px" width="10" height="6" viewBox="0 0 10 6" fill="none"><path d="M1 0.5L5 4.5l4-4" stroke="#333" stroke-width="1"/></svg><div style="position:absolute;left:1648px;top:163px;width:32px;height:978px;background:#ffffff"></div><div style="position:absolute;left:1648px;top:1141px;width:32px;height:35px;background:#f3f2f1"></div><div style="position:absolute;left:1680px;top:163px;width:1px;height:1013px;background:#e1dfdd"></div><svg style="position:absolute;left:1658px;top:173px" width="13" height="12" viewBox="0 0 13 12" fill="none"><path d="M6 0.6L0.8 5.9L6 11.2M11.6 0.6L6.3 5.9l5.3 5.3" stroke="#252423" stroke-width="1.1"/></svg><svg style="position:absolute;left:1660px;top:203px" width="13" height="13" viewBox="0 0 13 13" fill="none"><path d="M11.2 0.8V12.2L5.5 7.5H0.8V5.5H5.5Z" stroke="#252423" stroke-width="1.1" stroke-linejoin="miter"/></svg><div class="t" style="left:1644px;top:238px;width:40px;text-align:center;font-size:15px;color:#252423;transform:rotate(90deg);-webkit-text-stroke:0.4px currentColor;">Filters</div><div style="position:absolute;left:1681px;top:163px;width:180px;height:1013px;background:#f3f2f1"></div><div style="position:absolute;left:1861px;top:163px;width:1px;height:1013px;background:#e1dfdd"></div><div class="t" style="left:1689.5px;top:173.8px;font-size:15px;color:#252423;font-weight:400;letter-spacing:0.45px;-webkit-text-stroke:0.4px currentColor;">Visualizations</div><svg style="position:absolute;left:1841px;top:175px" width="12" height="12" viewBox="0 0 12 12" fill="none"><path d="M0.8 0.8L5.5 6L0.8 11.2M6.3 0.8L11 6l-4.7 5.2" stroke="#252423" stroke-width="1.1"/></svg><div class="t" style="left:1689.5px;top:201.8px;font-size:12px;color:#252423;font-weight:400;-webkit-text-stroke:0.4px currentColor;">Build visual</div><div style="position:absolute;left:1689px;top:219px;width:32px;height:32px;background:#d2d0ce;border-radius:2px"></div><svg style="position:absolute;left:1692px;top:222px" width="26" height="26" viewBox="0 0 26 26" fill="none"><path d="M1 1.5h19" stroke="#252423" stroke-width="1.2"/><rect x="1.5" y="6" width="23" height="8" fill="#f2c811" stroke="#252423" stroke-width="1" stroke-dasharray="1.6 1"/><rect x="1.5" y="17" width="23" height="7.5" fill="#f2c811" stroke="#252423" stroke-width="1" stroke-dasharray="1.6 1"/></svg><svg style="position:absolute;left:1761px;top:224px" width="23" height="24" viewBox="0 0 23 24" fill="none"><path d="M1.5 20V9.5h4V2.5h6v7h6" stroke="#252423" stroke-width="1.1"/><path d="M8 22c3 0 5-2 5.5-4L21 8.5l-1.5-1.5-8 8c-2 .5-3.5 2.5-3.5 7z" stroke="#252423" stroke-width="1.1"/></svg><svg style="position:absolute;left:1825px;top:223px" width="25" height="25" viewBox="0 0 25 25" fill="none"><circle cx="10.5" cy="10.5" r="9.2" stroke="#252423" stroke-width="1.2"/><path d="M3 11l4-3 4 3 6-4" stroke="#252423" stroke-width="1.1"/><path d="M6 12v6M9 12v7M12 13v6M15 11v7" stroke="#252423" stroke-width="1.1"/><path d="M17 17l6 6" stroke="#252423" stroke-width="2.2"/></svg><svg style="position:absolute;left:1681px;top:255px" width="180" height="10" viewBox="0 0 180 10" fill="none"><path d="M0 8.5H16.5L24.5 1L32.5 8.5H180" stroke="#8a8886" stroke-width="1" fill="#f3f2f1"/></svg><svg style="position:absolute;left:1692px;top:277px" width="18" height="18" viewBox="0 0 18 18" fill="none"><path d="M0.5 0v17.5H18" stroke="#252423" stroke-width="1"/><rect x="0.5" y="2" width="5" height="3" fill="#fff" stroke="#252423" stroke-width="0.8"/><rect x="5.5" y="2" width="6" height="3" fill="#7fb8ea" stroke="#1a86d8" stroke-width="0.8"/><rect x="0.5" y="10.5" width="7" height="3" fill="#fff" stroke="#252423" stroke-width="0.8"/><rect x="7.5" y="10.5" width="8" height="3" fill="#bdbdbd" stroke="#888" stroke-width="0.8"/></svg><svg style="position:absolute;left:1720px;top:277px" width="18" height="18" viewBox="0 0 18 18" fill="none"><path d="M0.5 0v17.5H18" stroke="#252423" stroke-width="1"/><rect x="3.5" y="5" width="3.5" height="6" fill="#7fb8ea" stroke="#1a86d8" stroke-width="0.8"/><rect x="3.5" y="11" width="3.5" height="6.5" fill="#fff" stroke="#252423" stroke-width="0.8"/><rect x="11.5" y="2" width="3.5" height="8" fill="#bdbdbd" stroke="#888" stroke-width="0.8"/><rect x="11.5" y="10" width="3.5" height="7.5" fill="#fff" stroke="#252423" stroke-width="0.8"/></svg><svg style="position:absolute;left:1748px;top:277px" width="18" height="18" viewBox="0 0 18 18" fill="none"><path d="M0.5 0v17.5H18" stroke="#252423" stroke-width="1"/><rect x="0.5" y="0.5" width="17" height="4" fill="#7fb8ea" stroke="#1a86d8" stroke-width="0.8"/><rect x="0.5" y="8" width="6" height="3" fill="#bdbdbd" stroke="#888" stroke-width="0.8"/><rect x="0.5" y="13" width="12" height="3" fill="#fff" stroke="#252423" stroke-width="0.8"/></svg><svg style="position:absolute;left:1776px;top:277px" width="18" height="18" viewBox="0 0 18 18" fill="none"><path d="M0.5 0v17.5H18" stroke="#252423" stroke-width="1"/><rect x="1" y="0.5" width="4.5" height="17" fill="#7fb8ea" stroke="#1a86d8" stroke-width="0.8"/><rect x="5.5" y="7" width="3" height="10.5" fill="#fff" stroke="#252423" stroke-width="0.8"/><rect x="10" y="10" width="3" height="7.5" fill="#bdbdbd" stroke="#888" stroke-width="0.8"/><rect x="13.5" y="5" width="3.5" height="12.5" fill="#fff" stroke="#252423" stroke-width="0.8"/></svg><svg style="position:absolute;left:1804px;top:277px" width="18" height="18" viewBox="0 0 18 18" fill="none"><path d="M0.5 0v17.5H18" stroke="#252423" stroke-width="1"/><rect x="0.5" y="2" width="4" height="3" fill="#fff" stroke="#252423" stroke-width="0.8"/><rect x="4.5" y="2" width="11" height="3" fill="#7fb8ea" stroke="#1a86d8" stroke-width="0.8"/><rect x="0.5" y="10.5" width="10" height="3" fill="#fff" stroke="#252423" stroke-width="0.8"/><rect x="10.5" y="10.5" width="5" height="3" fill="#bdbdbd" stroke="#888" stroke-width="0.8"/></svg><svg style="position:absolute;left:1832px;top:277px" width="18" height="18" viewBox="0 0 18 18" fill="none"><path d="M0.5 0v17.5H18" stroke="#252423" stroke-width="1"/><rect x="3.5" y="2" width="3.5" height="11" fill="#7fb8ea" stroke="#1a86d8" stroke-width="0.8"/><rect x="3.5" y="13" width="3.5" height="4.5" fill="#fff" stroke="#252423" stroke-width="0.8"/><rect x="11.5" y="2" width="3.5" height="5" fill="#bdbdbd" stroke="#888" stroke-width="0.8"/><rect x="11.5" y="7" width="3.5" height="10.5" fill="#fff" stroke="#252423" stroke-width="0.8"/></svg><svg style="position:absolute;left:1692px;top:305px" width="18" height="18" viewBox="0 0 18 18" fill="none"><path d="M0.5 0v17.5H18" stroke="#252423" stroke-width="1"/><path d="M0.5 10l5-4 4 3 5-5 3 3" stroke="#252423" stroke-width="1"/><path d="M0.5 14l6-7 5 5 6-6" stroke="#1a86d8" stroke-width="1"/></svg><svg style="position:absolute;left:1720px;top:305px" width="18" height="18" viewBox="0 0 18 18" fill="none"><path d="M0.5 17.5L7 2l5 9 3-9 3 15.5z" fill="#bdbdbd" stroke="#888" stroke-width="0.7"/><path d="M0.5 17.5V12l3 3 6-7 8 9.5z" fill="#7fb8ea" stroke="#1a86d8" stroke-width="1"/><path d="M0.5 12L7 2l4 7" stroke="#252423" stroke-width="1" fill="none"/></svg><svg style="position:absolute;left:1748px;top:305px" width="18" height="18" viewBox="0 0 18 18" fill="none"><path d="M0.5 0v17.5H18" stroke="#252423" stroke-width="1"/><path d="M0.5 5l5 6 6-7 6 4v4l-6-4-6 7-5-6z" fill="#7fb8ea" stroke="#1a86d8" stroke-width="1"/></svg><svg style="position:absolute;left:1776px;top:305px" width="18" height="18" viewBox="0 0 18 18" fill="none"><path d="M0.5 0v17.5H18" stroke="#252423" stroke-width="1"/><rect x="3" y="2" width="3.5" height="12" fill="#7fb8ea" stroke="#1a86d8" stroke-width="0.8"/><rect x="12" y="2" width="3.5" height="6" fill="#bdbdbd" stroke="#888" stroke-width="0.8"/><path d="M0.5 17l4-5 4 3 5-5 5 5" stroke="#252423" stroke-width="1"/></svg><svg style="position:absolute;left:1804px;top:305px" width="18" height="18" viewBox="0 0 18 18" fill="none"><path d="M0.5 0v17.5H18" stroke="#252423" stroke-width="1"/><rect x="3" y="9" width="4" height="8.5" fill="#7fb8ea" stroke="#1a86d8" stroke-width="0.8"/><rect x="8" y="1" width="3.5" height="16.5" fill="#fff" stroke="#252423" stroke-width="0.8"/><rect x="12.5" y="5" width="3.5" height="12.5" fill="#bdbdbd" stroke="#888" stroke-width="0.8"/><path d="M0.5 16l7-6 4 4 6-6" stroke="#252423" stroke-width="1"/></svg><svg style="position:absolute;left:1832px;top:305px" width="18" height="18" viewBox="0 0 18 18" fill="none"><path d="M0.5 0v17.5H18" stroke="#252423" stroke-width="1"/><path d="M1 3l8 3 8-3v5l-8 4-8-4z" fill="#bdbdbd" stroke="#888" stroke-width="0.7"/><path d="M1 8l8 4 8-4v6l-8 2-8-2z" fill="#7fb8ea" stroke="#1a86d8" stroke-width="0.9"/><rect x="2" y="12" width="3" height="2" fill="#e8700f"/><rect x="13" y="12" width="3" height="2" fill="#e8700f"/></svg><svg style="position:absolute;left:1692px;top:333px" width="18" height="18" viewBox="0 0 18 18" fill="none"><path d="M0.5 0v17.5H18" stroke="#252423" stroke-width="1"/><path d="M2.5 17.5V6h3.5v11.5M6 9h3v4h2.5V1h3.5v16.5" stroke="#252423" stroke-width="1" fill="#fff"/><rect x="9.5" y="1" width="2" height="10" fill="#1a86d8"/></svg><svg style="position:absolute;left:1720px;top:333px" width="18" height="18" viewBox="0 0 18 18" fill="none"><path d="M0.5 1h17v4h-17zM3 5.5h12v4H3zM5.5 10h7v5.5h-7z" fill="#7fb8ea" stroke="#1a86d8" stroke-width="1"/></svg><svg style="position:absolute;left:1748px;top:333px" width="18" height="18" viewBox="0 0 18 18" fill="none"><path d="M0.5 0v17.5H18" stroke="#252423" stroke-width="1"/><rect x="12" y="1.5" width="2.5" height="2.5" fill="#252423"/><rect x="3" y="4" width="2.5" height="2.5" fill="#7fb8ea"/><rect x="8" y="8" width="2.5" height="2.5" fill="#7fb8ea"/><rect x="3" y="12.5" width="2.5" height="2.5" fill="#252423"/><rect x="13" y="11" width="2.5" height="2.5" fill="#7fb8ea"/></svg><svg style="position:absolute;left:1776px;top:333px" width="18" height="18" viewBox="0 0 18 18" fill="none"><circle cx="9" cy="9" r="8.3" fill="#fafafa" stroke="#252423" stroke-width="1"/><path d="M9 0.7A8.3 8.3 0 0 1 14.5 15.2L9 9z" fill="#7fb8ea" stroke="#1a86d8" stroke-width="1"/></svg><svg style="position:absolute;left:1804px;top:333px" width="18" height="18" viewBox="0 0 18 18" fill="none"><circle cx="9" cy="9" r="6.3" fill="none" stroke="#7fb8ea" stroke-width="4"/><path d="M9 0.7A8.3 8.3 0 1 1 0.7 9H4.7A4.3 4.3 0 1 0 9 4.7z" fill="#7fb8ea" stroke="#1a86d8" stroke-width="0.9"/><circle cx="9" cy="9" r="4.3" stroke="#252423" stroke-width="0.7" fill="#f3f2f1"/></svg><svg style="position:absolute;left:1832px;top:333px" width="18" height="18" viewBox="0 0 18 18" fill="none"><rect x="0.5" y="0.5" width="17" height="17" fill="#fff" stroke="#252423" stroke-width="1"/><rect x="0.5" y="0.5" width="8" height="17" fill="#7fb8ea" stroke="#1a86d8" stroke-width="1"/><path d="M1 9h7" stroke="#1a86d8" stroke-width="1"/><path d="M8.5 7.5h9M12.5 7.5v10M8.5 12h9" stroke="#252423" stroke-width="1"/></svg><svg style="position:absolute;left:1692px;top:361px" width="18" height="18" viewBox="0 0 18 18" fill="none"><circle cx="9" cy="8" r="6.5" fill="#fff" stroke="#252423" stroke-width="1.1"/><path d="M5 4c2 1 4 0 5 2s-2 3 0 5 2 3 1 4M12 3c1 2 3 2 3 4" stroke="#2a9d3a" stroke-width="2.2"/><path d="M4 17.5h10M9 14.5v3" stroke="#252423" stroke-width="1"/></svg><svg style="position:absolute;left:1720px;top:361px" width="18" height="18" viewBox="0 0 18 18" fill="none"><path d="M1 2l4-1 2 4 4-1 4 1 2 0v8l-4 5-6-2-4 2-2-6z" fill="#bdbdbd" stroke="#666" stroke-width="0.8"/><path d="M2 2l3-1 2 4-2 4-3-2zM11 9l5-2v4l-3 5-3-1z" fill="#7fb8ea" stroke="#1a86d8" stroke-width="0.9"/></svg><svg style="position:absolute;left:1748px;top:361px" width="18" height="18" viewBox="0 0 18 18" fill="none"><path d="M1 14a8 8 0 0 1 16 0h-4a4 4 0 0 0-8 0z" fill="#fff" stroke="#252423" stroke-width="1"/><path d="M9 6a8 8 0 0 1 8 8h-4a4 4 0 0 0-4-4z" fill="#7fb8ea" stroke="#1a86d8" stroke-width="1"/><path d="M8 13l4-4" stroke="#252423" stroke-width="1.4"/></svg><svg style="position:absolute;left:1776px;top:361px" width="18" height="18" viewBox="0 0 18 18" fill="none"><rect x="0.5" y="2" width="17" height="13.5" fill="#fff" stroke="#252423" stroke-width="1"/><text x="9" y="11.5" font-size="7.5" font-family="Liberation Sans" fill="#1a86d8" text-anchor="middle">123</text><path d="M2.5 13h13" stroke="#777" stroke-width="0.7"/></svg><svg style="position:absolute;left:1804px;top:361px" width="18" height="18" viewBox="0 0 18 18" fill="none"><rect x="0.5" y="0.5" width="17" height="17" fill="#fff" stroke="#252423" stroke-width="1"/><path d="M3 3.5v11" stroke="#777" stroke-width="0.8"/><path d="M5 5h10M5 10.5h10" stroke="#1a86d8" stroke-width="1.6"/><path d="M5 7.7h4M5 13h4" stroke="#777" stroke-width="0.8"/></svg><svg style="position:absolute;left:1832px;top:361px" width="18" height="18" viewBox="0 0 18 18" fill="none"><rect x="0.5" y="1.5" width="17" height="14" fill="#fff" stroke="#252423" stroke-width="1"/><path d="M2.5 9l2.5-4 2.5 4z" fill="#2a9d3a"/><path d="M10 4.5h5l-2.5 4.5z" fill="#e8700f"/><path d="M2 12h14" stroke="#777" stroke-width="0.7"/></svg><svg style="position:absolute;left:1692px;top:389px" width="18" height="18" viewBox="0 0 18 18" fill="none"><rect x="0.5" y="0.5" width="17" height="17" fill="#fff" stroke="#252423" stroke-width="1"/><rect x="0.5" y="0.5" width="17" height="2.5" fill="#bbb"/><rect x="4" y="7" width="2.5" height="2.5" stroke="#666" stroke-width="0.8"/><rect x="4" y="12" width="2.5" height="2.5" stroke="#666" stroke-width="0.8"/><path d="M9.5 10h8l-3 3.5v4.5h-2v-4.5z" fill="#fff" stroke="#252423" stroke-width="1"/></svg><div style="position:absolute;left:1717px;top:386px;width:24px;height:24px;background:#d2d0ce;border:1px solid #b0aeac;box-sizing:border-box"></div><svg style="position:absolute;left:1720px;top:389px" width="18" height="18" viewBox="0 0 18 18" fill="none"><rect x="0.5" y="0.5" width="17" height="17" fill="#fff" stroke="#252423" stroke-width="1.1"/><rect x="0.5" y="0.5" width="17" height="2.5" fill="#bbb"/><path d="M0.5 7h17M0.5 12h17M6 3v14.5M12 3v14.5" stroke="#555" stroke-width="0.9"/></svg><svg style="position:absolute;left:1748px;top:389px" width="18" height="18" viewBox="0 0 18 18" fill="none"><rect x="0.5" y="0.5" width="17" height="17" fill="#fff" stroke="#252423" stroke-width="1"/><rect x="0.5" y="0.5" width="17" height="2.5" fill="#bbb"/><rect x="12" y="3" width="5.5" height="14.5" fill="#7fb8ea"/><rect x="0.5" y="12" width="17" height="5.5" fill="#7fb8ea"/><path d="M0.5 7h17M0.5 12h17M6 3v14.5M12 3v14.5" stroke="#1a86d8" stroke-width="0.9"/></svg><svg style="position:absolute;left:1776px;top:389px" width="18" height="18" viewBox="0 0 18 18" fill="none"><text x="9" y="15" font-size="15" font-weight="700" font-family="Liberation Sans" fill="#1a86d8" text-anchor="middle">R</text></svg><svg style="position:absolute;left:1804px;top:389px" width="18" height="18" viewBox="0 0 18 18" fill="none"><text x="9" y="14" font-size="14" font-weight="700" font-family="Liberation Sans" fill="#1a86d8" text-anchor="middle">Py</text></svg><svg style="position:absolute;left:1832px;top:389px" width="18" height="18" viewBox="0 0 18 18" fill="none"><path d="M0.5 0v17.5H18M0.5 2.5h14M0.5 8h9M0.5 13h6" stroke="#252423" stroke-width="0.9"/><circle cx="15.5" cy="2.5" r="1.8" fill="#7fb8ea" stroke="#1a86d8" stroke-width="1"/><rect x="9" y="7" width="2" height="2" stroke="#666" stroke-width="0.7"/><rect x="6" y="12" width="2" height="2" stroke="#666" stroke-width="0.7"/></svg><svg style="position:absolute;left:1692px;top:417px" width="18" height="18" viewBox="0 0 18 18" fill="none"><rect x="0.5" y="7" width="5" height="3.5" fill="#7fb8ea" stroke="#1a86d8" stroke-width="0.9"/><rect x="12" y="1" width="5.5" height="3.5" fill="#7fb8ea" stroke="#1a86d8" stroke-width="0.9"/><rect x="12" y="7" width="5.5" height="3.5" fill="#7fb8ea" stroke="#1a86d8" stroke-width="0.9"/><rect x="12" y="13" width="5.5" height="3.5" fill="#7fb8ea" stroke="#1a86d8" stroke-width="0.9"/><path d="M5.5 9H9M9 3v12M9 3h3M9 9h3M9 15h3" stroke="#252423" stroke-width="0.8"/></svg><svg style="position:absolute;left:1720px;top:417px" width="18" height="18" viewBox="0 0 18 18" fill="none"><path d="M0.5 1h17v11H6l-4 4.5V12H0.5z" fill="#fff" stroke="#1a86d8" stroke-width="1.1"/></svg><svg style="position:absolute;left:1748px;top:417px" width="18" height="18" viewBox="0 0 18 18" fill="none"><path d="M1.5 0.5h10l5 5v12h-15z" fill="#fff" stroke="#252423" stroke-width="1"/><circle cx="2" cy="6.5" r="1.4" stroke="#1a86d8" stroke-width="0.9"/><path d="M5 8h8M5 11h6" stroke="#1a86d8" stroke-width="1"/></svg><svg style="position:absolute;left:1776px;top:417px" width="18" height="18" viewBox="0 0 18 18" fill="none"><path d="M1.5 0.5h10l5 5v12.5h-15z" fill="#fafafa" stroke="#252423" stroke-width="1.1"/><path d="M4.5 15v-4M8 15v-3M12 15V8" stroke="#252423" stroke-width="1.8"/></svg><svg style="position:absolute;left:1804px;top:417px" width="18" height="18" viewBox="0 0 18 18" fill="none"><rect x="1" y="2" width="16" height="15.5" fill="#fff" stroke="#1a86d8" stroke-width="1.1"/><path d="M6 17l3-4 3-3 2-5h3v8l-6 4z" fill="#7fb8ea"/><path d="M0.5 0.5h4v5l-2 3-2-3z" fill="#e8700f"/><circle cx="15" cy="15" r="2.2" fill="#e8700f"/><circle cx="17" cy="11" r="1" fill="#e8700f"/></svg><svg style="position:absolute;left:1832px;top:417px" width="18" height="18" viewBox="0 0 18 18" fill="none"><path d="M9 1l8 8-8 8-8-8z" fill="none" stroke="#7b3fa6" stroke-width="1.1"/><path d="M6 4l8 8M12 4l-8 8M5 9l4-4 4 4-4 4z" stroke="#7b3fa6" stroke-width="0.9" fill="none"/></svg><svg style="position:absolute;left:1692px;top:445px" width="18" height="18" viewBox="0 0 18 18" fill="none"><path d="M0.5 3h10l6 6-6 6h-10l6-6z" fill="#fff" stroke="#1a86d8" stroke-width="1.2"/><path d="M4 13l7-7" stroke="#1a86d8" stroke-width="1"/></svg><svg style="position:absolute;left:1720px;top:445px" width="18" height="18" viewBox="0 0 18 18" fill="none"><rect x="2" y="6.5" width="2" height="2" fill="#3b3a39"/><rect x="8.7" y="6.5" width="2" height="2" fill="#3b3a39"/><rect x="15.3" y="6.5" width="2" height="2" fill="#3b3a39"/></svg><div style="position:absolute;left:1681px;top:474px;width:180px;height:1px;background:#e1dfdd"></div><div class="t" style="left:1693.0px;top:486.3px;font-size:12px;color:#252423;font-weight:400;">Columns</div><div style="position:absolute;left:1686px;top:505px;width:168px;height:162px;border:1px dashed #a19f9d;box-sizing:border-box;background:#ffffff;border-radius:2px"></div><div style="position:absolute;left:1688px;top:509px;width:164px;height:23px;background:#edebe9;border:1px solid #c8c6c4;box-sizing:border-box;border-radius:2px"></div><div class="t" style="left:1693.0px;top:514.8px;font-size:12px;color:#252423;font-weight:400;">datetime</div><svg style="position:absolute;left:1821px;top:517px" width="12" height="7" viewBox="0 0 12 7" fill="none"><path d="M0.6 0.6L6 6l5.4-5.4" stroke="#252423" stroke-width="1"/></svg><svg style="position:absolute;left:1838px;top:515.5px" width="9" height="9" viewBox="0 0 9 9" fill="none"><path d="M0.8 0.8l7.4 7.4M8.2 0.8L0.8 8.2" stroke="#252423" stroke-width="1"/></svg><div style="position:absolute;left:1688px;top:534px;width:164px;height:23px;background:#edebe9;border:1px solid #c8c6c4;box-sizing:border-box;border-radius:2px"></div><div class="t" style="left:1693.0px;top:539.8px;font-size:12px;color:#252423;font-weight:400;">precip</div><svg style="position:absolute;left:1821px;top:542px" width="12" height="7" viewBox="0 0 12 7" fill="none"><path d="M0.6 0.6L6 6l5.4-5.4" stroke="#252423" stroke-width="1"/></svg><svg style="position:absolute;left:1838px;top:540.5px" width="9" height="9" viewBox="0 0 9 9" fill="none"><path d="M0.8 0.8l7.4 7.4M8.2 0.8L0.8 8.2" stroke="#252423" stroke-width="1"/></svg><div style="position:absolute;left:1688px;top:559px;width:164px;height:23px;background:#edebe9;border:1px solid #c8c6c4;box-sizing:border-box;border-radius:2px"></div><div class="t" style="left:1693.0px;top:564.8px;font-size:12px;color:#252423;font-weight:400;">tempmin</div><svg style="position:absolute;left:1821px;top:567px" width="12" height="7" viewBox="0 0 12 7" fill="none"><path d="M0.6 0.6L6 6l5.4-5.4" stroke="#252423" stroke-width="1"/></svg><svg style="position:absolute;left:1838px;top:565.5px" width="9" height="9" viewBox="0 0 9 9" fill="none"><path d="M0.8 0.8l7.4 7.4M8.2 0.8L0.8 8.2" stroke="#252423" stroke-width="1"/></svg><div style="position:absolute;left:1688px;top:584px;width:164px;height:23px;background:#edebe9;border:1px solid #c8c6c4;box-sizing:border-box;border-radius:2px"></div><div class="t" style="left:1693.0px;top:589.8px;font-size:12px;color:#252423;font-weight:400;">winddir</div><svg style="position:absolute;left:1821px;top:592px" width="12" height="7" viewBox="0 0 12 7" fill="none"><path d="M0.6 0.6L6 6l5.4-5.4" stroke="#252423" stroke-width="1"/></svg><svg style="position:absolute;left:1838px;top:590.5px" width="9" height="9" viewBox="0 0 9 9" fill="none"><path d="M0.8 0.8l7.4 7.4M8.2 0.8L0.8 8.2" stroke="#252423" stroke-width="1"/></svg><div style="position:absolute;left:1688px;top:609px;width:164px;height:23px;background:#edebe9;border:1px solid #c8c6c4;box-sizing:border-box;border-radius:2px"></div><div class="t" style="left:1693.0px;top:614.8px;font-size:12px;color:#252423;font-weight:400;">windgust</div><svg style="position:absolute;left:1821px;top:617px" width="12" height="7" viewBox="0 0 12 7" fill="none"><path d="M0.6 0.6L6 6l5.4-5.4" stroke="#252423" stroke-width="1"/></svg><svg style="position:absolute;left:1838px;top:615.5px" width="9" height="9" viewBox="0 0 9 9" fill="none"><path d="M0.8 0.8l7.4 7.4M8.2 0.8L0.8 8.2" stroke="#252423" stroke-width="1"/></svg><div style="position:absolute;left:1688px;top:634px;width:164px;height:23px;background:#edebe9;border:1px solid #c8c6c4;box-sizing:border-box;border-radius:2px"></div><div class="t" style="left:1693.0px;top:639.8px;font-size:12px;color:#252423;font-weight:400;">windspeed</div><svg style="position:absolute;left:1821px;top:642px" width="12" height="7" viewBox="0 0 12 7" fill="none"><path d="M0.6 0.6L6 6l5.4-5.4" stroke="#252423" stroke-width="1"/></svg><svg style="position:absolute;left:1838px;top:640.5px" width="9" height="9" viewBox="0 0 9 9" fill="none"><path d="M0.8 0.8l7.4 7.4M8.2 0.8L0.8 8.2" stroke="#252423" stroke-width="1"/></svg><div class="t" style="left:1693.0px;top:679.8px;font-size:12.6px;color:#252423;font-weight:400;-webkit-text-stroke:0.2px currentColor;">Drill through</div><div class="t" style="left:1693.0px;top:704.8px;font-size:12px;color:#252423;font-weight:400;">Cross-report</div><div style="position:absolute;left:1823px;top:703px;width:32px;height:16px;border:1px solid #605e5c;border-radius:9px;box-sizing:border-box;background:#fff"></div><div style="position:absolute;left:1827.5px;top:707px;width:8px;height:8px;border-radius:50%;background:#605e5c"></div><div class="t" style="left:1837.5px;top:707.0px;font-size:9.5px;color:#605e5c;font-weight:400;">Off</div><div class="t" style="left:1693.0px;top:731.8px;font-size:12px;color:#252423;font-weight:400;">Keep all filters</div><div style="position:absolute;left:1823px;top:730px;width:32px;height:16px;border-radius:9px;background:#5c5a58"></div><div style="position:absolute;left:1842.5px;top:734px;width:8px;height:8px;border-radius:50%;background:#fff"></div><div class="t" style="left:1827.0px;top:734.0px;font-size:9.5px;color:#fff;font-weight:400;-webkit-text-stroke:0.2px currentColor;">On</div><div style="position:absolute;left:1686px;top:756px;width:168px;height:26px;border:1px dashed #a19f9d;box-sizing:border-box;background:#ffffff;border-radius:2px"></div><div class="t" style="left:1694.0px;top:763.7px;font-size:12.2px;color:#252423;font-weight:400;">Add drill-through fields here</div><div style="position:absolute;left:1862px;top:163px;width:181px;height:1013px;background:#f3f2f1"></div><div class="t" style="left:1870.5px;top:173.8px;font-size:15px;color:#252423;font-weight:400;-webkit-text-stroke:0.4px currentColor;">Fields</div><svg style="position:absolute;left:2022px;top:175px" width="12" height="12" viewBox="0 0 12 12" fill="none"><path d="M0.8 0.8L5.5 6L0.8 11.2M6.3 0.8L11 6l-4.7 5.2" stroke="#252423" stroke-width="1.1"/></svg><div style="position:absolute;left:1866px;top:207px;width:172px;height:27px;background:#fff;border:1px solid #8a8886;box-sizing:border-box;border-radius:2px"></div><svg style="position:absolute;left:1874px;top:213px" width="15" height="15" viewBox="0 0 15 15" fill="none"><circle cx="9.5" cy="5.5" r="4.6" stroke="#252423" stroke-width="1.1"/><path d="M6.2 8.8L1 14" stroke="#252423" stroke-width="1.2"/></svg><div class="t" style="left:1895.5px;top:214.5px;font-size:13px;color:#605e5c;font-weight:400;">Search</div><div style="position:absolute;left:2030px;top:242px;width:8px;height:914px;background:#c8c6c4"></div><svg style="position:absolute;left:1870px;top:251.5px" width="12" height="7" viewBox="0 0 12 7" fill="none"><path d="M0.6 0.6L6 6l5.4-5.4" stroke="#605e5c" stroke-width="1"/></svg><svg style="position:absolute;left:1884px;top:248px" width="14" height="13" viewBox="0 0 14 13" fill="none"><path d="M0.6 0.6h12.8v11.8H0.6z" stroke="#252423" stroke-width="1.1"/><path d="M0.6 1.3h12.8" stroke="#252423" stroke-width="1.6"/><path d="M0.6 5h12.8M0.6 8.7h12.8M4.8 2v10.4M9.2 2v10.4" stroke="#252423" stroke-width="1"/></svg><div style="position:absolute;left:1891px;top:255px;width:12px;height:12px;border-radius:50%;background:#f2c811"></div><svg style="position:absolute;left:1894px;top:258px" width="7" height="6" viewBox="0 0 7 6" fill="none"><path d="M0.5 3l2 2L6.5 0.8" stroke="#252423" stroke-width="1.2"/></svg><div class="t" style="left:1903.0px;top:250.3px;font-size:12px;color:#252423;font-weight:400;letter-spacing:-0.35px">London%2CUK?unitG...</div><div style="position:absolute;left:0;top:0;width:2043px;height:1168px;overflow:hidden"><div style="position:absolute;left:1900px;top:273px;width:12px;height:12px;border:1px solid #8a8886;box-sizing:border-box;background:#f3f2f1;border-radius:1.5px"></div><svg style="position:absolute;left:1920px;top:272px" width="11" height="14" viewBox="0 0 11 14" fill="none"><path d="M10.5 0.6H1.2l5.3 6.4-5.3 6.4h9.3" stroke="#252423" stroke-width="0.95"/></svg><div class="t" style="left:1938.5px;top:274.3px;font-size:12px;color:#252423;font-weight:400;">cloudcover</div><div style="position:absolute;left:1900px;top:297px;width:12px;height:12px;border:1px solid #8a8886;box-sizing:border-box;background:#f3f2f1;border-radius:1.5px"></div><div class="t" style="left:1938.5px;top:298.3px;font-size:12px;color:#252423;font-weight:400;">conditions</div><svg style="position:absolute;left:1884px;top:324.5px" width="12" height="7" viewBox="0 0 12 7" fill="none"><path d="M0.6 0.6L6 6l5.4-5.4" stroke="#605e5c" stroke-width="1"/></svg><div style="position:absolute;left:1900px;top:321px;width:12px;height:12px;background:#f2c811;border-radius:1.5px"></div><svg style="position:absolute;left:1902px;top:324px" width="8" height="6" viewBox="0 0 8 6" fill="none"><path d="M0.5 3l2.3 2.3L7.5 0.5" stroke="#444" stroke-width="1"/></svg><svg style="position:absolute;left:1918px;top:318.5px" width="16" height="16" viewBox="0 0 16 16" fill="none"><rect x="0.6" y="2.6" width="14.8" height="12.8" stroke="#252423" stroke-width="1.1"/><path d="M0.6 5.5h14.8M4 0.5v3M12 0.5v3" stroke="#252423" stroke-width="1.1"/><rect x="3.0" y="7.5" width="1" height="1" fill="#666"/><rect x="5.5" y="7.5" width="1" height="1" fill="#666"/><rect x="8.0" y="7.5" width="1" height="1" fill="#666"/><rect x="10.5" y="7.5" width="1" height="1" fill="#666"/><rect x="13.0" y="7.5" width="1" height="1" fill="#666"/><rect x="3.0" y="10.0" width="1" height="1" fill="#666"/><rect x="5.5" y="10.0" width="1" height="1" fill="#666"/><rect x="8.0" y="10.0" width="1" height="1" fill="#666"/><rect x="10.5" y="10.0" width="1" height="1" fill="#666"/><rect x="13.0" y="10.0" width="1" height="1" fill="#666"/><rect x="3.0" y="12.5" width="1" height="1" fill="#666"/><rect x="5.5" y="12.5" width="1" height="1" fill="#666"/><rect x="8.0" y="12.5" width="1" height="1" fill="#666"/><rect x="10.5" y="12.5" width="1" height="1" fill="#666"/><rect x="13.0" y="12.5" width="1" height="1" fill="#666"/></svg><div class="t" style="left:1938.5px;top:322.3px;font-size:12px;color:#252423;font-weight:400;">datetime</div><svg style="position:absolute;left:1899px;top:348.5px" width="12" height="7" viewBox="0 0 12 7" fill="none"><path d="M0.6 0.6L6 6l5.4-5.4" stroke="#605e5c" stroke-width="1"/></svg><div style="position:absolute;left:1915px;top:345px;width:12px;height:12px;border:1px solid #8a8886;box-sizing:border-box;background:#f3f2f1;border-radius:1.5px"></div><svg style="position:absolute;left:1936px;top:344px" width="10" height="16" viewBox="0 0 10 16" fill="none"><path d="M0.5 0.5h3v3h-3zM3.5 2h0M2 3.5v10h4M2 8h4M6 6.5h3.5v3H6zM6 12h3.5v3H6z" stroke="#252423" stroke-width="0.9"/></svg><div class="t" style="left:1953.0px;top:346.3px;font-size:12px;color:#252423;font-weight:400;letter-spacing:-0.2px">Date Hierarc...</div><div style="position:absolute;left:1930px;top:369px;width:12px;height:12px;border:1px solid #8a8886;box-sizing:border-box;background:#f3f2f1;border-radius:1.5px"></div><div class="t" style="left:1967.0px;top:370.3px;font-size:12px;color:#252423;font-weight:400;">Year</div><div style="position:absolute;left:1930px;top:393px;width:12px;height:12px;border:1px solid #8a8886;box-sizing:border-box;background:#f3f2f1;border-radius:1.5px"></div><div class="t" style="left:1967.0px;top:394.3px;font-size:12px;color:#252423;font-weight:400;">Quarter</div><div style="position:absolute;left:1930px;top:417px;width:12px;height:12px;border:1px solid #8a8886;box-sizing:border-box;background:#f3f2f1;border-radius:1.5px"></div><div class="t" style="left:1967.0px;top:418.3px;font-size:12px;color:#252423;font-weight:400;">Month</div><div style="position:absolute;left:1930px;top:441px;width:12px;height:12px;border:1px solid #8a8886;box-sizing:border-box;background:#f3f2f1;border-radius:1.5px"></div><div class="t" style="left:1967.0px;top:442.3px;font-size:12px;color:#252423;font-weight:400;">Day</div><div style="position:absolute;left:1900px;top:465px;width:12px;height:12px;border:1px solid #8a8886;box-sizing:border-box;background:#f3f2f1;border-radius:1.5px"></div><div class="t" style="left:1938.5px;top:466.3px;font-size:12px;color:#252423;font-weight:400;">description</div><div style="position:absolute;left:1900px;top:489px;width:12px;height:12px;border:1px solid #8a8886;box-sizing:border-box;background:#f3f2f1;border-radius:1.5px"></div><svg style="position:absolute;left:1920px;top:488px" width="11" height="14" viewBox="0 0 11 14" fill="none"><path d="M10.5 0.6H1.2l5.3 6.4-5.3 6.4h9.3" stroke="#252423" stroke-width="0.95"/></svg><div class="t" style="left:1938.5px;top:490.3px;font-size:12px;color:#252423;font-weight:400;">dew</div><div style="position:absolute;left:1900px;top:513px;width:12px;height:12px;border:1px solid #8a8886;box-sizing:border-box;background:#f3f2f1;border-radius:1.5px"></div><svg style="position:absolute;left:1920px;top:512px" width="11" height="14" viewBox="0 0 11 14" fill="none"><path d="M10.5 0.6H1.2l5.3 6.4-5.3 6.4h9.3" stroke="#252423" stroke-width="0.95"/></svg><div class="t" style="left:1938.5px;top:514.3px;font-size:12px;color:#252423;font-weight:400;">feelslike</div><div style="position:absolute;left:1900px;top:537px;width:12px;height:12px;border:1px solid #8a8886;box-sizing:border-box;background:#f3f2f1;border-radius:1.5px"></div><svg style="position:absolute;left:1920px;top:536px" width="11" height="14" viewBox="0 0 11 14" fill="none"><path d="M10.5 0.6H1.2l5.3 6.4-5.3 6.4h9.3" stroke="#252423" stroke-width="0.95"/></svg><div class="t" style="left:1938.5px;top:538.3px;font-size:12px;color:#252423;font-weight:400;">feelslikemax</div><div style="position:absolute;left:1900px;top:561px;width:12px;height:12px;border:1px solid #8a8886;box-sizing:border-box;background:#f3f2f1;border-radius:1.5px"></div><svg style="position:absolute;left:1920px;top:560px" width="11" height="14" viewBox="0 0 11 14" fill="none"><path d="M10.5 0.6H1.2l5.3 6.4-5.3 6.4h9.3" stroke="#252423" stroke-width="0.95"/></svg><div class="t" style="left:1938.5px;top:562.3px;font-size:12px;color:#252423;font-weight:400;">feelslikemin</div><div style="position:absolute;left:1900px;top:585px;width:12px;height:12px;border:1px solid #8a8886;box-sizing:border-box;background:#f3f2f1;border-radius:1.5px"></div><svg style="position:absolute;left:1920px;top:584px" width="11" height="14" viewBox="0 0 11 14" fill="none"><path d="M10.5 0.6H1.2l5.3 6.4-5.3 6.4h9.3" stroke="#252423" stroke-width="0.95"/></svg><div class="t" style="left:1938.5px;top:586.3px;font-size:12px;color:#252423;font-weight:400;">humidity</div><div style="position:absolute;left:1900px;top:609px;width:12px;height:12px;border:1px solid #8a8886;box-sizing:border-box;background:#f3f2f1;border-radius:1.5px"></div><div class="t" style="left:1938.5px;top:610.3px;font-size:12px;color:#252423;font-weight:400;">icon</div><div style="position:absolute;left:1900px;top:633px;width:12px;height:12px;border:1px solid #8a8886;box-sizing:border-box;background:#f3f2f1;border-radius:1.5px"></div><svg style="position:absolute;left:1920px;top:632px" width="11" height="14" viewBox="0 0 11 14" fill="none"><path d="M10.5 0.6H1.2l5.3 6.4-5.3 6.4h9.3" stroke="#252423" stroke-width="0.95"/></svg><div class="t" style="left:1938.5px;top:634.3px;font-size:12px;color:#252423;font-weight:400;">moonphase</div><div style="position:absolute;left:1900px;top:657px;width:12px;height:12px;border:1px solid #8a8886;box-sizing:border-box;background:#f3f2f1;border-radius:1.5px"></div><div class="t" style="left:1938.5px;top:658.3px;font-size:12px;color:#252423;font-weight:400;">name</div><div style="position:absolute;left:1900px;top:681px;width:12px;height:12px;background:#f2c811;border-radius:1.5px"></div><svg style="position:absolute;left:1902px;top:684px" width="8" height="6" viewBox="0 0 8 6" fill="none"><path d="M0.5 3l2.3 2.3L7.5 0.5" stroke="#444" stroke-width="1"/></svg><svg style="position:absolute;left:1920px;top:680px" width="11" height="14" viewBox="0 0 11 14" fill="none"><path d="M10.5 0.6H1.2l5.3 6.4-5.3 6.4h9.3" stroke="#252423" stroke-width="0.95"/></svg><div class="t" style="left:1938.5px;top:682.3px;font-size:12px;color:#252423;font-weight:400;">precip</div><div style="position:absolute;left:1900px;top:705px;width:12px;height:12px;border:1px solid #8a8886;box-sizing:border-box;background:#f3f2f1;border-radius:1.5px"></div><div class="t" style="left:1938.5px;top:706.3px;font-size:12px;color:#252423;font-weight:400;">precipcover</div><div style="position:absolute;left:1900px;top:729px;width:12px;height:12px;border:1px solid #8a8886;box-sizing:border-box;background:#f3f2f1;border-radius:1.5px"></div><svg style="position:absolute;left:1920px;top:728px" width="11" height="14" viewBox="0 0 11 14" fill="none"><path d="M10.5 0.6H1.2l5.3 6.4-5.3 6.4h9.3" stroke="#252423" stroke-width="0.95"/></svg><div class="t" style="left:1938.5px;top:730.3px;font-size:12px;color:#252423;font-weight:400;">precipprob</div><div style="position:absolute;left:1900px;top:753px;width:12px;height:12px;border:1px solid #8a8886;box-sizing:border-box;background:#f3f2f1;border-radius:1.5px"></div><div class="t" style="left:1938.5px;top:754.3px;font-size:12px;color:#252423;font-weight:400;">preciptype</div><div style="position:absolute;left:1900px;top:777px;width:12px;height:12px;border:1px solid #8a8886;box-sizing:border-box;background:#f3f2f1;border-radius:1.5px"></div><svg style="position:absolute;left:1920px;top:776px" width="11" height="14" viewBox="0 0 11 14" fill="none"><path d="M10.5 0.6H1.2l5.3 6.4-5.3 6.4h9.3" stroke="#252423" stroke-width="0.95"/></svg><div class="t" style="left:1938.5px;top:778.3px;font-size:12px;color:#252423;font-weight:400;">sealevelpressure</div><div style="position:absolute;left:1900px;top:801px;width:12px;height:12px;border:1px solid #8a8886;box-sizing:border-box;background:#f3f2f1;border-radius:1.5px"></div><svg style="position:absolute;left:1920px;top:800px" width="11" height="14" viewBox="0 0 11 14" fill="none"><path d="M10.5 0.6H1.2l5.3 6.4-5.3 6.4h9.3" stroke="#252423" stroke-width="0.95"/></svg><div class="t" style="left:1938.5px;top:802.3px;font-size:12px;color:#252423;font-weight:400;">severerisk</div><div style="position:absolute;left:1900px;top:825px;width:12px;height:12px;border:1px solid #8a8886;box-sizing:border-box;background:#f3f2f1;border-radius:1.5px"></div><svg style="position:absolute;left:1920px;top:824px" width="11" height="14" viewBox="0 0 11 14" fill="none"><path d="M10.5 0.6H1.2l5.3 6.4-5.3 6.4h9.3" stroke="#252423" stroke-width="0.95"/></svg><div class="t" style="left:1938.5px;top:826.3px;font-size:12px;color:#252423;font-weight:400;">snow</div><div style="position:absolute;left:1900px;top:849px;width:12px;height:12px;border:1px solid #8a8886;box-sizing:border-box;background:#f3f2f1;border-radius:1.5px"></div><svg style="position:absolute;left:1920px;top:848px" width="11" height="14" viewBox="0 0 11 14" fill="none"><path d="M10.5 0.6H1.2l5.3 6.4-5.3 6.4h9.3" stroke="#252423" stroke-width="0.95"/></svg><div class="t" style="left:1938.5px;top:850.3px;font-size:12px;color:#252423;font-weight:400;">snowdepth</div><div style="position:absolute;left:1900px;top:873px;width:12px;height:12px;border:1px solid #8a8886;box-sizing:border-box;background:#f3f2f1;border-radius:1.5px"></div><svg style="position:absolute;left:1920px;top:872px" width="11" height="14" viewBox="0 0 11 14" fill="none"><path d="M10.5 0.6H1.2l5.3 6.4-5.3 6.4h9.3" stroke="#252423" stroke-width="0.95"/></svg><div class="t" style="left:1938.5px;top:874.3px;font-size:12px;color:#252423;font-weight:400;">solarenergy</div><div style="position:absolute;left:1900px;top:897px;width:12px;height:12px;border:1px solid #8a8886;box-sizing:border-box;background:#f3f2f1;border-radius:1.5px"></div><svg style="position:absolute;left:1920px;top:896px" width="11" height="14" viewBox="0 0 11 14" fill="none"><path d="M10.5 0.6H1.2l5.3 6.4-5.3 6.4h9.3" stroke="#252423" stroke-width="0.95"/></svg><div class="t" style="left:1938.5px;top:898.3px;font-size:12px;color:#252423;font-weight:400;">solarradiation</div><div style="position:absolute;left:1900px;top:921px;width:12px;height:12px;border:1px solid #8a8886;box-sizing:border-box;background:#f3f2f1;border-radius:1.5px"></div><div class="t" style="left:1938.5px;top:922.3px;font-size:12px;color:#252423;font-weight:400;">stations</div><svg style="position:absolute;left:1887px;top:946px" width="7" height="12" viewBox="0 0 7 12" fill="none"><path d="M0.8 0.8L6 6L0.8 11.2" stroke="#605e5c" stroke-width="1"/></svg><div style="position:absolute;left:1900px;top:945px;width:12px;height:12px;border:1px solid #8a8886;box-sizing:border-box;background:#f3f2f1;border-radius:1.5px"></div><svg style="position:absolute;left:1918px;top:942.5px" width="16" height="16" viewBox="0 0 16 16" fill="none"><rect x="0.6" y="2.6" width="14.8" height="12.8" stroke="#252423" stroke-width="1.1"/><path d="M0.6 5.5h14.8M4 0.5v3M12 0.5v3" stroke="#252423" stroke-width="1.1"/><rect x="3.0" y="7.5" width="1" height="1" fill="#666"/><rect x="5.5" y="7.5" width="1" height="1" fill="#666"/><rect x="8.0" y="7.5" width="1" height="1" fill="#666"/><rect x="10.5" y="7.5" width="1" height="1" fill="#666"/><rect x="13.0" y="7.5" width="1" height="1" fill="#666"/><rect x="3.0" y="10.0" width="1" height="1" fill="#666"/><rect x="5.5" y="10.0" width="1" height="1" fill="#666"/><rect x="8.0" y="10.0" width="1" height="1" fill="#666"/><rect x="10.5" y="10.0" width="1" height="1" fill="#666"/><rect x="13.0" y="10.0" width="1" height="1" fill="#666"/><rect x="3.0" y="12.5" width="1" height="1" fill="#666"/><rect x="5.5" y="12.5" width="1" height="1" fill="#666"/><rect x="8.0" y="12.5" width="1" height="1" fill="#666"/><rect x="10.5" y="12.5" width="1" height="1" fill="#666"/><rect x="13.0" y="12.5" width="1" height="1" fill="#666"/></svg><div class="t" style="left:1938.5px;top:946.3px;font-size:12px;color:#252423;font-weight:400;">sunrise</div><svg style="position:absolute;left:1887px;top:970px" width="7" height="12" viewBox="0 0 7 12" fill="none"><path d="M0.8 0.8L6 6L0.8 11.2" stroke="#605e5c" stroke-width="1"/></svg><div style="position:absolute;left:1900px;top:969px;width:12px;height:12px;border:1px solid #8a8886;box-sizing:border-box;background:#f3f2f1;border-radius:1.5px"></div><svg style="position:absolute;left:1918px;top:966.5px" width="16" height="16" viewBox="0 0 16 16" fill="none"><rect x="0.6" y="2.6" width="14.8" height="12.8" stroke="#252423" stroke-width="1.1"/><path d="M0.6 5.5h14.8M4 0.5v3M12 0.5v3" stroke="#252423" stroke-width="1.1"/><rect x="3.0" y="7.5" width="1" height="1" fill="#666"/><rect x="5.5" y="7.5" width="1" height="1" fill="#666"/><rect x="8.0" y="7.5" width="1" height="1" fill="#666"/><rect x="10.5" y="7.5" width="1" height="1" fill="#666"/><rect x="13.0" y="7.5" width="1" height="1" fill="#666"/><rect x="3.0" y="10.0" width="1" height="1" fill="#666"/><rect x="5.5" y="10.0" width="1" height="1" fill="#666"/><rect x="8.0" y="10.0" width="1" height="1" fill="#666"/><rect x="10.5" y="10.0" width="1" height="1" fill="#666"/><rect x="13.0" y="10.0" width="1" height="1" fill="#666"/><rect x="3.0" y="12.5" width="1" height="1" fill="#666"/><rect x="5.5" y="12.5" width="1" height="1" fill="#666"/><rect x="8.0" y="12.5" width="1" height="1" fill="#666"/><rect x="10.5" y="12.5" width="1" height="1" fill="#666"/><rect x="13.0" y="12.5" width="1" height="1" fill="#666"/></svg><div class="t" style="left:1938.5px;top:970.3px;font-size:12px;color:#252423;font-weight:400;">sunset</div><div style="position:absolute;left:1900px;top:993px;width:12px;height:12px;border:1px solid #8a8886;box-sizing:border-box;background:#f3f2f1;border-radius:1.5px"></div><svg style="position:absolute;left:1920px;top:992px" width="11" height="14" viewBox="0 0 11 14" fill="none"><path d="M10.5 0.6H1.2l5.3 6.4-5.3 6.4h9.3" stroke="#252423" stroke-width="0.95"/></svg><div class="t" style="left:1938.5px;top:994.3px;font-size:12px;color:#252423;font-weight:400;">temp</div><div style="position:absolute;left:1900px;top:1017px;width:12px;height:12px;border:1px solid #8a8886;box-sizing:border-box;background:#f3f2f1;border-radius:1.5px"></div><svg style="position:absolute;left:1920px;top:1016px" width="11" height="14" viewBox="0 0 11 14" fill="none"><path d="M10.5 0.6H1.2l5.3 6.4-5.3 6.4h9.3" stroke="#252423" stroke-width="0.95"/></svg><div class="t" style="left:1938.5px;top:1018.3px;font-size:12px;color:#252423;font-weight:400;">tempmax</div><div style="position:absolute;left:1900px;top:1041px;width:12px;height:12px;background:#f2c811;border-radius:1.5px"></div><svg style="position:absolute;left:1902px;top:1044px" width="8" height="6" viewBox="0 0 8 6" fill="none"><path d="M0.5 3l2.3 2.3L7.5 0.5" stroke="#444" stroke-width="1"/></svg><svg style="position:absolute;left:1920px;top:1040px" width="11" height="14" viewBox="0 0 11 14" fill="none"><path d="M10.5 0.6H1.2l5.3 6.4-5.3 6.4h9.3" stroke="#252423" stroke-width="0.95"/></svg><div class="t" style="left:1938.5px;top:1042.3px;font-size:12px;color:#252423;font-weight:400;">tempmin</div><div style="position:absolute;left:1900px;top:1065px;width:12px;height:12px;border:1px solid #8a8886;box-sizing:border-box;background:#f3f2f1;border-radius:1.5px"></div><svg style="position:absolute;left:1920px;top:1064px" width="11" height="14" viewBox="0 0 11 14" fill="none"><path d="M10.5 0.6H1.2l5.3 6.4-5.3 6.4h9.3" stroke="#252423" stroke-width="0.95"/></svg><div class="t" style="left:1938.5px;top:1066.3px;font-size:12px;color:#252423;font-weight:400;">uvindex</div><div style="position:absolute;left:1900px;top:1089px;width:12px;height:12px;border:1px solid #8a8886;box-sizing:border-box;background:#f3f2f1;border-radius:1.5px"></div><svg style="position:absolute;left:1920px;top:1088px" width="11" height="14" viewBox="0 0 11 14" fill="none"><path d="M10.5 0.6H1.2l5.3 6.4-5.3 6.4h9.3" stroke="#252423" stroke-width="0.95"/></svg><div class="t" style="left:1938.5px;top:1090.3px;font-size:12px;color:#252423;font-weight:400;">visibility</div><div style="position:absolute;left:1900px;top:1113px;width:12px;height:12px;background:#f2c811;border-radius:1.5px"></div><svg style="position:absolute;left:1902px;top:1116px" width="8" height="6" viewBox="0 0 8 6" fill="none"><path d="M0.5 3l2.3 2.3L7.5 0.5" stroke="#444" stroke-width="1"/></svg><svg style="position:absolute;left:1920px;top:1112px" width="11" height="14" viewBox="0 0 11 14" fill="none"><path d="M10.5 0.6H1.2l5.3 6.4-5.3 6.4h9.3" stroke="#252423" stroke-width="0.95"/></svg><div class="t" style="left:1938.5px;top:1114.3px;font-size:12px;color:#252423;font-weight:400;">winddir</div><div style="position:absolute;left:1900px;top:1137px;width:12px;height:12px;background:#f2c811;border-radius:1.5px"></div><svg style="position:absolute;left:1902px;top:1140px" width="8" height="6" viewBox="0 0 8 6" fill="none"><path d="M0.5 3l2.3 2.3L7.5 0.5" stroke="#444" stroke-width="1"/></svg><svg style="position:absolute;left:1920px;top:1136px" width="11" height="14" viewBox="0 0 11 14" fill="none"><path d="M10.5 0.6H1.2l5.3 6.4-5.3 6.4h9.3" stroke="#252423" stroke-width="0.95"/></svg><div class="t" style="left:1938.5px;top:1138.3px;font-size:12px;color:#252423;font-weight:400;">windgust</div><div style="position:absolute;left:1900px;top:1161px;width:12px;height:12px;background:#f2c811;border-radius:1.5px"></div><svg style="position:absolute;left:1902px;top:1164px" width="8" height="6" viewBox="0 0 8 6" fill="none"><path d="M0.5 3l2.3 2.3L7.5 0.5" stroke="#444" stroke-width="1"/></svg><svg style="position:absolute;left:1920px;top:1160px" width="11" height="14" viewBox="0 0 11 14" fill="none"><path d="M10.5 0.6H1.2l5.3 6.4-5.3 6.4h9.3" stroke="#252423" stroke-width="0.95"/></svg><div class="t" style="left:1938.5px;top:1162.3px;font-size:12px;color:#252423;font-weight:400;">windspeed</div></div><div style="position:absolute;left:0px;top:163px;width:2043px;height:4px;background:linear-gradient(#ececec,rgba(255,255,255,0))"></div>
</body></html>
